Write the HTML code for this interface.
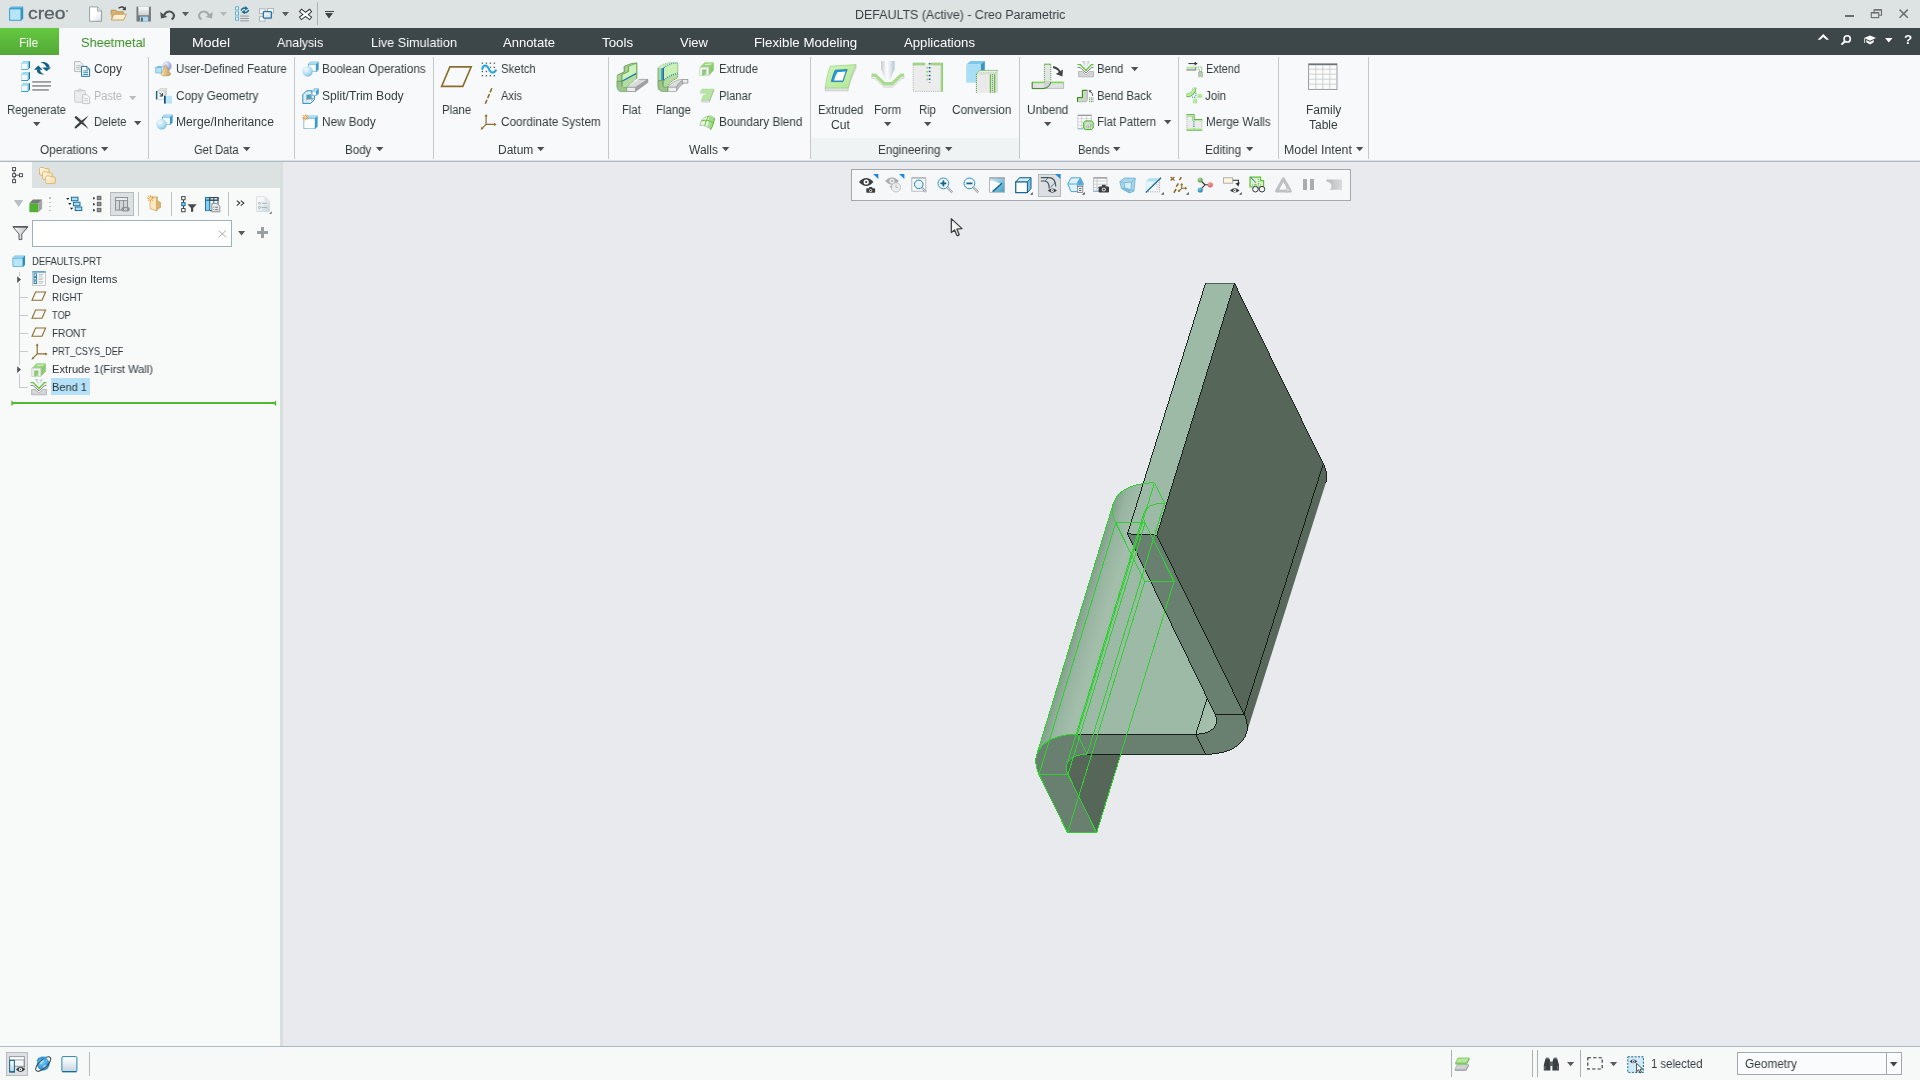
<!DOCTYPE html>
<html>
<head>
<meta charset="utf-8">
<title>DEFAULTS (Active) - Creo Parametric</title>
<style>
html,body{margin:0;padding:0;}
body{width:1920px;height:1080px;position:relative;overflow:hidden;background:#e8eaee;font-family:"Liberation Sans",sans-serif;font-size:12px;color:#353c3f;}
.a{position:absolute;}
.t{position:absolute;white-space:nowrap;line-height:1;transform-origin:0 0;color:#353c3f;will-change:transform;}
svg{position:absolute;overflow:visible;}
#titlebar{left:0;top:0;width:1920px;height:28px;background:#dde2e2;}
#menubar{left:0;top:28px;width:1920px;height:27px;background:#3d4649;}
#filetab{left:0;top:28px;width:59px;height:27px;background:linear-gradient(#63c840,#53a936);}
#smtab{left:59px;top:28px;width:111px;height:27px;background:#f7f9fa;}
#ribbon{left:0;top:55px;width:1920px;height:106px;background:#f7f9fa;}
#ribline{left:0;top:160px;width:1920px;height:2px;background:linear-gradient(#dde4e6 0,#dde4e6 50%,#adbbc0 50%,#adbbc0 100%);}
.sep{position:absolute;top:57px;width:1px;height:102px;background:#c3c9cb;}
#left{left:0;top:162px;width:280px;height:884px;background:#f8fafa;}
#ltabs{left:32px;top:162px;width:248px;height:26px;background:#dce2e2;}
#split{left:280px;top:162px;width:3px;height:884px;background:#d8dfdf;}
#view{left:283px;top:162px;width:1637px;height:884px;background:#e8eaee;}
#status{left:0;top:1046px;width:1920px;height:34px;background:#f7f9f9;border-top:1.4px solid #a9bcc1;box-sizing:border-box;}
.ar{position:absolute;width:0;height:0;border-left:3.5px solid transparent;border-right:3.5px solid transparent;border-top:4px solid #4a5356;}
.ard{border-top-color:#b9bfc1;}
.arw{border-top-color:#fff;}
</style>
</head>
<body>
<div class="a" id="titlebar"></div>
<div class="a" id="menubar"></div>
<div class="a" id="filetab"></div>
<div class="a" id="smtab"></div>
<div class="a" id="ribbon"></div>
<div class="a" id="ribline"></div>
<div class="a" id="left"></div>
<div class="a" id="ltabs"></div>
<div class="a" id="split"></div>
<div class="a" id="view"></div>
<div class="a" id="status"></div>
<div class="a" style="left:811px;top:138px;width:208px;height:22px;background:#f0f3f4"></div>
<div class="sep" style="left:148px"></div>
<div class="sep" style="left:294px"></div>
<div class="sep" style="left:433px"></div>
<div class="sep" style="left:608px"></div>
<div class="sep" style="left:810px"></div>
<div class="sep" style="left:1019px"></div>
<div class="sep" style="left:1178px"></div>
<div class="sep" style="left:1278px"></div>
<div class="sep" style="left:1368px"></div>
<!-- title -->
<svg style="left:8px;top:6px" width="17" height="16" viewBox="0 0 17 16" ><polygon points="1.2,2.6 3.2,0.8 15.2,0.8 15.2,12.6 13.2,14.6 1.2,14.6" fill="#2f93c4"/><polygon points="1.2,2.6 3.2,0.8 15.2,0.8 13.2,2.6" fill="#5fb8df"/><rect x="1.7" y="3" width="11.2" height="11.2" fill="#b8e4f7" stroke="#3a9fd0" stroke-width="0.8"/></svg>
<span class="t" style="left:28.1px;top:5px;font-size:17.2px;color:#596165;-webkit-text-stroke:0.3px #596165;transform:scaleX(1.125)">creo</span>
<div class="a" style="left:65.8px;top:9.6px;width:2.2px;height:2.2px;border-radius:1.1px;background:#70777a"></div>
<svg style="left:89px;top:6px" width="14" height="17" viewBox="0 0 14 17" ><defs><linearGradient id="nd" x1="0" y1="0" x2="1" y2="1"><stop offset="0.5" stop-color="#fff"/><stop offset="1" stop-color="#d6dde2"/></linearGradient></defs><path d="M0.6,0.9 H8.5 L12.6,5 V15.3 H0.6 Z" fill="url(#nd)" stroke="#8e979c" stroke-width="0.9"/><path d="M8.5,0.9 V5 H12.6" fill="#dfe6ea" stroke="#8e979c" stroke-width="0.8"/></svg>
<svg style="left:110px;top:5px" width="18" height="17" viewBox="0 0 18 17" ><path d="M1.2,5.2 h4.6 l1.3,1.6 h6.2 v3 h-12.1 z" fill="#d9b36e" stroke="#b48a45" stroke-width="0.8"/><path d="M1.2,14.9 L1.2,9 L3.6,9 L1.5,14.9 Z" fill="#d9b36e"/><path d="M3.9,9.2 H16.3 L13.6,15 H1.4 Z" fill="#fbefd3" stroke="#c29a55" stroke-width="0.9"/><path d="M8.6,3.3 C10.5,1.6 13,1.6 14.3,3.2" fill="none" stroke="#3b4245" stroke-width="1.4"/><polygon points="12.3,4.9 16,5.2 15.7,1.3" fill="#3b4245"/></svg>
<svg style="left:136px;top:6px" width="16" height="17" viewBox="0 0 16 17" ><defs><linearGradient id="sv" x1="0" y1="0" x2="0" y2="1"><stop offset="0" stop-color="#fdfdfd"/><stop offset="1" stop-color="#c9cfd2"/></linearGradient></defs><rect x="0.5" y="0.7" width="14.4" height="14.8" fill="#73797c"/><rect x="2.3" y="0.7" width="10.6" height="8.6" fill="url(#sv)"/><rect x="3.9" y="10.6" width="8.3" height="4.9" fill="#a9d8ef"/><rect x="5" y="11.6" width="1.8" height="3.9" fill="#596165"/></svg>
<svg style="left:159.6px;top:8px" width="16" height="13" viewBox="0 0 16 13" ><g><path d="M4.2,7.3 C5.2,3.4 10.2,2.2 12.9,5.1 C14.7,7.1 14.1,10 11.6,11.4" fill="none" stroke="#4a5154" stroke-width="2.1"/><polygon points="0.3,4.1 1,10.6 7.3,9.1" fill="#4a5154"/></g></svg>
<svg style="left:182px;top:12.2px" width="7" height="4.2" viewBox="0 0 7 4.2"><polygon points="0,0 7,0 3.5,4.2" fill="#565d60"/></svg>
<svg style="left:197.4px;top:8px" width="16" height="13" viewBox="0 0 16 13" ><g transform="translate(16,0) scale(-1,1)"><path d="M4.2,7.3 C5.2,3.4 10.2,2.2 12.9,5.1 C14.7,7.1 14.1,10 11.6,11.4" fill="none" stroke="#a3a9ab" stroke-width="2.1"/><polygon points="0.3,4.1 1,10.6 7.3,9.1" fill="#a3a9ab"/></g></svg>
<svg style="left:220.4px;top:12.2px" width="7" height="4.2" viewBox="0 0 7 4.2"><polygon points="0,0 7,0 3.5,4.2" fill="#b4b9bb"/></svg>
<svg style="left:235px;top:6.3px" width="15" height="16" viewBox="0 0 15 16" ><rect x="0.6" y="0.9" width="3" height="3" fill="#fff" stroke="#3a9fd0" stroke-width="0.8"/><rect x="0.6" y="6" width="3" height="3" fill="#fff" stroke="#3a9fd0" stroke-width="0.8"/><rect x="0.6" y="11.1" width="3" height="3" fill="#fff" stroke="#3a9fd0" stroke-width="0.8"/><rect x="5.2" y="9.6" width="8.6" height="0.9" fill="#8a9093"/><rect x="5.2" y="12" width="8.6" height="0.9" fill="#8a9093"/><rect x="5.2" y="14.4" width="8.6" height="0.9" fill="#8a9093"/><path d="M6.2,4.6 C6.6,2.2 9.3,1.3 11,2.6" fill="none" stroke="#1f6f94" stroke-width="1.5"/><polygon points="9.8,0.1 13.4,2.5 10.1,4.6" fill="#1f6f94"/><path d="M13.6,3.8 C13.2,6.2 10.5,7.1 8.8,5.8" fill="none" stroke="#1f6f94" stroke-width="1.5"/><polygon points="10,8.3 6.4,5.9 9.7,3.8" fill="#1f6f94"/></svg>
<svg style="left:259px;top:8px" width="16" height="14" viewBox="0 0 16 14" ><rect x="0.5" y="0.8" width="5.6" height="4.6" fill="#f4f6f7" stroke="#a4aaad" stroke-width="0.8"/><rect x="8.6" y="0.4" width="5.8" height="4.6" fill="#f4f6f7" stroke="#a4aaad" stroke-width="0.8"/><rect x="0.5" y="8.6" width="5.6" height="4.6" fill="#f4f6f7" stroke="#a4aaad" stroke-width="0.8"/><defs><linearGradient id="wn" x1="0" y1="0" x2="1" y2="1"><stop offset="0" stop-color="#ffffff"/><stop offset="1" stop-color="#c5d6e2"/></linearGradient></defs><rect x="4.4" y="3.6" width="8" height="6.6" rx="0.8" fill="url(#wn)" stroke="#2377a0" stroke-width="1.3"/></svg>
<svg style="left:281.9px;top:12.2px" width="7" height="4.2" viewBox="0 0 7 4.2"><polygon points="0,0 7,0 3.5,4.2" fill="#565d60"/></svg>
<svg style="left:299px;top:9px" width="13" height="11" viewBox="0 0 13 11" ><path d="M2.7,2.5 L10.3,8.4 M10.3,2.5 L2.7,8.4" stroke="#2e3538" stroke-width="4.2" fill="none" stroke-linecap="square"/><path d="M2.7,2.5 L10.3,8.4 M10.3,2.5 L2.7,8.4" stroke="#fff" stroke-width="2.3" fill="none" stroke-linecap="square"/></svg>
<div class="a" style="left:317px;top:2px;width:1px;height:23px;background:#aab1b4"></div>
<div class="a" style="left:325px;top:10.6px;width:9px;height:1px;background:#3e4548"></div>
<svg style="left:325.4px;top:12.8px" width="8" height="5.4" viewBox="0 0 8 5.4"><polygon points="0,0 8,0 4.0,5.4" fill="#3e4548"/></svg>
<div class="a" style="left:1845px;top:15px;width:9px;height:2px;background:#6a6e70"></div>
<svg style="left:1870px;top:9px" width="13" height="10" viewBox="0 0 13 10" ><path d="M4.1,2.9 V0.8 H11.5 V6.2 H9" fill="none" stroke="#6a6e70" stroke-width="1.1"/><rect x="1.3" y="3.6" width="7.4" height="5" fill="none" stroke="#6a6e70" stroke-width="1.1"/><rect x="1.3" y="3.1" width="7.4" height="1.4" fill="#6a6e70"/><rect x="4.1" y="0.3" width="7.4" height="1.3" fill="#6a6e70"/></svg>
<svg style="left:1898px;top:8px" width="12" height="11" viewBox="0 0 12 11" ><path d="M1.6,1.6 L9.8,9.8 M9.8,1.6 L1.6,9.8" stroke="#6a6e70" stroke-width="1.5" fill="none"/></svg>
<svg style="left:1817px;top:33px" width="13" height="8" viewBox="0 0 13 8" ><polygon points="6.3,0.9 12,6.8 9.4,6.8 6.3,3.9 3.2,6.8 0.6,6.8" fill="#fff"/></svg>
<svg style="left:1840px;top:35px" width="12" height="11" viewBox="0 0 12 11" ><circle cx="7.2" cy="3.9" r="3.1" fill="none" stroke="#fff" stroke-width="1.6"/><path d="M5,6.2 L1.4,9.6" stroke="#fff" stroke-width="1.9"/></svg>
<svg style="left:1863px;top:35px" width="14" height="11" viewBox="0 0 14 11" ><polygon points="7,0.4 13,3 7,5.8 1,3" fill="#fff"/><path d="M3.3,5.1 V7.2 L7,9.6 L10.7,7.2 V5.1 L7,7 Z" fill="#fff"/><path d="M1.6,3.4 V8" stroke="#fff" stroke-width="0.8"/></svg>
<svg style="left:1884.7px;top:37.8px" width="7.6" height="4.4" viewBox="0 0 7.6 4.4"><polygon points="0,0 7.6,0 3.8,4.4" fill="#fff"/></svg>
<span class="t" style="left:1904.2px;top:32.6px;font-size:13.5px;font-weight:bold;color:#fff">?</span>
<!-- ribbon_icons -->
<svg style="left:21px;top:61px" width="31" height="31" viewBox="0 0 31 31" ><polygon points="0.3,2.4000000000000004 2.5,0.2 8.9,0.2 8.9,6.6000000000000005 6.7,8.8 0.3,8.8" fill="#1f8fc5"/><polygon points="6.7,2.4000000000000004 8.200000000000001,0.8999999999999999 8.200000000000001,6.2 6.7,7.9" fill="#7fc0e0"/><polygon points="8.200000000000001,0.5 8.9,0.2 8.9,6.6000000000000005 8.200000000000001,7.1000000000000005" fill="#0f5f86"/><polygon points="0.3,2.4000000000000004 2.5,0.2 8.3,0.2 6.7,2.4000000000000004" fill="#a5e0f7"/><rect x="0.3" y="2.4000000000000004" width="6.4" height="5.6000000000000005" fill="#f0fbff"/><rect x="0.3" y="2.4000000000000004" width="0.6" height="5.6000000000000005" fill="#c9d2d6"/><polygon points="0.3,13.5 2.5,11.3 8.9,11.3 8.9,17.700000000000003 6.7,19.900000000000002 0.3,19.900000000000002" fill="#1f8fc5"/><polygon points="6.7,13.5 8.200000000000001,12.0 8.200000000000001,17.300000000000004 6.7,19.000000000000004" fill="#7fc0e0"/><polygon points="8.200000000000001,11.600000000000001 8.9,11.3 8.9,17.700000000000003 8.200000000000001,18.200000000000003" fill="#0f5f86"/><polygon points="0.3,13.5 2.5,11.3 8.3,11.3 6.7,13.5" fill="#a5e0f7"/><rect x="0.3" y="13.5" width="6.4" height="5.6000000000000005" fill="#f0fbff"/><rect x="0.3" y="13.5" width="0.6" height="5.6000000000000005" fill="#c9d2d6"/><polygon points="0.3,24.5 2.5,22.3 8.9,22.3 8.9,28.700000000000003 6.7,30.900000000000002 0.3,30.900000000000002" fill="#1f8fc5"/><polygon points="6.7,24.5 8.200000000000001,23.0 8.200000000000001,28.300000000000004 6.7,30.000000000000004" fill="#7fc0e0"/><polygon points="8.200000000000001,22.6 8.9,22.3 8.9,28.700000000000003 8.200000000000001,29.200000000000003" fill="#0f5f86"/><polygon points="0.3,24.5 2.5,22.3 8.3,22.3 6.7,24.5" fill="#a5e0f7"/><rect x="0.3" y="24.5" width="6.4" height="5.6000000000000005" fill="#f0fbff"/><rect x="0.3" y="24.5" width="0.6" height="5.6000000000000005" fill="#c9d2d6"/><rect x="11.2" y="20" width="18.8" height="1.8" fill="#9a9c9d"/><rect x="11.2" y="24" width="18.8" height="1.8" fill="#9a9c9d"/><rect x="11.2" y="28" width="16.6" height="1.8" fill="#9a9c9d"/><polygon points="13,8.8 17.3,4.4 21.7,8.8" fill="#0f5f86"/><path d="M15.9,8.6 C15.6,12.2 19,14 23.4,13.3 C20.6,12.5 19,10.8 19.1,8.6 Z" fill="#0f5f86"/><polygon points="21.2,6.4 30.1,6.4 25.5,10.3" fill="#0f5f86"/><path d="M19.6,1.4 C24,0 28.4,2.4 28.7,6.6 L25.4,6.6 C25.2,4 23,2.1 19.6,1.4 Z" fill="#0f5f86"/></svg>
<svg style="left:74px;top:61px" width="17" height="16" viewBox="0 0 17 16" ><path d="M0.6,0.6 H6 L8.8,3.4 V10.6 H0.6 Z" fill="#f3f4f5" stroke="#a5abad" stroke-width="0.8"/><path d="M2.2,4.6 H7 M2.2,6.4 H7 M2.2,8.2 H7" stroke="#b5babc" stroke-width="0.9"/><path d="M7.6,5.4 H12.8 L15.6,8.2 V15.3 H7.6 Z" fill="#fff" stroke="#1f6f94" stroke-width="1"/><path d="M12.8,5.4 V8.2 H15.6" fill="none" stroke="#1f6f94" stroke-width="0.8"/><path d="M9.3,9.9 H14 M9.3,11.7 H14 M9.3,13.5 H14" stroke="#2a8cc0" stroke-width="1"/></svg>
<svg style="left:74px;top:88px" width="17" height="17" viewBox="0 0 17 17" ><rect x="0.7" y="2.4" width="10.6" height="11.8" rx="0.8" fill="#ececec" stroke="#c6c9cb" stroke-width="0.9"/><path d="M3.4,3.2 L4.6,1.4 H5.2 L6,0.4 L6.8,1.4 H7.4 L8.6,3.2 Z" fill="#dcdedf" stroke="#c3c6c8" stroke-width="0.6"/><path d="M8.6,6.6 H13 L15.6,9.2 V15.6 H8.6 Z" fill="#f6f6f6" stroke="#c0c3c5" stroke-width="0.9"/><path d="M10.2,10.6 H14 M10.2,12.6 H14" stroke="#c6c9cb" stroke-width="0.9"/></svg>
<svg style="left:74px;top:115px" width="16" height="16" viewBox="0 0 16 16" ><path d="M0.7,2.7 Q0.5,1.2 2.2,1.1 Q6,4.2 9,7 Q12,10 14.7,14.2 Q10.6,11 7.2,8.6 Q3.6,5.6 0.7,2.7 Z" fill="#3b4043"/><path d="M0.6,12 Q0.3,13.6 2,13.6 Q5.8,10.4 9,7.2 Q12,4 14.6,0.4 Q10.4,3.4 7,6 Q3.4,9 0.6,12 Z" fill="#3b4043"/></svg>
<svg style="left:155px;top:61px" width="18" height="16" viewBox="0 0 18 16" ><defs><radialGradient id="sp1" cx="0.35" cy="0.3" r="0.8"><stop offset="0" stop-color="#f2f4ff"/><stop offset="1" stop-color="#7d8fd6"/></radialGradient><linearGradient id="cn" x1="0" y1="0" x2="1" y2="0"><stop offset="0" stop-color="#f6e3bb"/><stop offset="1" stop-color="#c39a53"/></linearGradient></defs><circle cx="12" cy="4.9" r="4.6" fill="url(#sp1)"/><polygon points="0.8,6.4 2.4,4.9 8,4.9 6.6,6.4" fill="#6fc3e8"/><rect x="0.8" y="6.4" width="5.8" height="5.6" fill="#b6e2f6" stroke="#4aa8d6" stroke-width="0.6"/><path d="M10.7,3.6 L15.7,13.2 C15.2,15.4 6.8,15.6 5.9,13.4 Z" fill="url(#cn)" stroke="#b48c49" stroke-width="0.5"/></svg>
<svg style="left:155px;top:88px" width="18" height="17" viewBox="0 0 18 17" ><polygon points="2.6,3 5,0.6 12,0.6 9.8,3" fill="#e9ebec" stroke="#b6babc" stroke-width="0.5"/><polygon points="9.8,3 12,0.6 12,7 9.8,9" fill="#cfd3d5"/><rect x="2.6" y="3" width="7.2" height="8.4" fill="#f3f4f5" stroke="#babec0" stroke-width="0.5"/><rect x="0.9" y="3" width="1.3" height="8.4" fill="#1b5f80"/><path d="M4.4,4.8 L7.4,7.8 M7.6,5.2 V8 H4.8" stroke="#2e3538" stroke-width="1" fill="none"/><rect x="10" y="7.8" width="7" height="7.8" fill="#b9e5f8"/><rect x="9" y="7.8" width="1.7" height="7.8" fill="#14506e"/></svg>
<svg style="left:155.6px;top:114px" width="18" height="16" viewBox="0 0 18 16" ><defs><radialGradient id="mg1" cx="0.35" cy="0.3" r="0.9"><stop offset="0" stop-color="#f4fbfe"/><stop offset="0.6" stop-color="#a8d9ef"/><stop offset="1" stop-color="#4aa3cf"/></radialGradient></defs><polygon points="6,3 8.3,0.7 16.6,0.7 16.6,8.6 14.3,10.9 6,10.9" fill="#3d9acb"/><polygon points="6,3 8.3,0.7 16.6,0.7 14.3,3" fill="#a8daf1"/><rect x="6.6" y="3.5" width="7.3" height="7" fill="#f2fafd"/><circle cx="5.6" cy="10.3" r="5.2" fill="url(#mg1)"/></svg>
<svg style="left:301.6px;top:61px" width="18" height="16" viewBox="0 0 18 16" ><defs><radialGradient id="mg2" cx="0.35" cy="0.3" r="0.9"><stop offset="0" stop-color="#f4fbfe"/><stop offset="0.6" stop-color="#a8d9ef"/><stop offset="1" stop-color="#4aa3cf"/></radialGradient></defs><polygon points="6,3 8.3,0.7 16.6,0.7 16.6,8.6 14.3,10.9 6,10.9" fill="#3d9acb"/><polygon points="6,3 8.3,0.7 16.6,0.7 14.3,3" fill="#a8daf1"/><rect x="6.6" y="3.5" width="7.3" height="7" fill="#f2fafd"/><circle cx="5.6" cy="10.3" r="5.2" fill="url(#mg2)"/></svg>
<svg style="left:301.6px;top:88px" width="18" height="17" viewBox="0 0 18 17" ><polygon points="0.8,6.6 4.6,2.8 10,2.8 10,6 12.4,6 12.4,11.6 8.6,15.4 0.8,15.4" fill="#d9eef8" stroke="#1f7fb0" stroke-width="0.9"/><polygon points="4.4,6.4 9.6,6.4 9.6,10.2 12,10.2 9.2,13 4.4,13" fill="#5b9cbb"/><polygon points="5.6,11.4 10.4,11.4 8.8,13 4.4,13" fill="#f4ece6"/><polygon points="9.8,3 12.2,0.6 16.8,0.6 16.8,5.4 14.4,7.8 9.8,7.8" fill="#3d9acb"/><polygon points="9.8,3 12.2,0.6 16.8,0.6 14.4,3" fill="#a8daf1"/><rect x="10.4" y="3.4" width="3.7" height="3.9" fill="#f4fbfe"/></svg>
<svg style="left:301.6px;top:114px" width="17" height="16" viewBox="0 0 17 16" ><polygon points="1.6,4.2 4,1.8 15.6,1.8 15.6,12.6 13.2,15 1.6,15" fill="#3d9acb"/><polygon points="1.6,4.2 4,1.8 15.6,1.8 13.2,4.2" fill="#a8daf1"/><rect x="2.2" y="4.7" width="10.6" height="9.8" fill="#fff"/><g stroke="#f08c1e" stroke-width="1"><path d="M3.4,0.4 V6.4 M0.4,3.4 H6.4 M1.3,1.3 L5.5,5.5 M5.5,1.3 L1.3,5.5"/></g><circle cx="3.4" cy="3.4" r="1.1" fill="#fff3d6"/></svg>
<svg style="left:440px;top:64px" width="33" height="24" viewBox="0 0 33 24" ><polygon points="9.9,2.9 31.2,2.9 22.8,22.4 1.6,22.4" fill="none" stroke="#8c6d2f" stroke-width="1.6"/></svg>
<svg style="left:481px;top:62px" width="17" height="16" viewBox="0 0 17 16" ><rect x="0.7499999999999999" y="0.5499999999999999" width="1.3" height="1.3" fill="#4a4f52"/><rect x="0.7499999999999999" y="4.75" width="1.3" height="1.3" fill="#4a4f52"/><rect x="0.7499999999999999" y="8.85" width="1.3" height="1.3" fill="#4a4f52"/><rect x="0.7499999999999999" y="13.049999999999999" width="1.3" height="1.3" fill="#4a4f52"/><rect x="4.75" y="0.5499999999999999" width="1.3" height="1.3" fill="#4a4f52"/><rect x="4.75" y="4.75" width="1.3" height="1.3" fill="#4a4f52"/><rect x="4.75" y="8.85" width="1.3" height="1.3" fill="#4a4f52"/><rect x="4.75" y="13.049999999999999" width="1.3" height="1.3" fill="#4a4f52"/><rect x="8.75" y="0.5499999999999999" width="1.3" height="1.3" fill="#4a4f52"/><rect x="8.75" y="4.75" width="1.3" height="1.3" fill="#4a4f52"/><rect x="8.75" y="8.85" width="1.3" height="1.3" fill="#4a4f52"/><rect x="8.75" y="13.049999999999999" width="1.3" height="1.3" fill="#4a4f52"/><rect x="12.75" y="0.5499999999999999" width="1.3" height="1.3" fill="#4a4f52"/><rect x="12.75" y="4.75" width="1.3" height="1.3" fill="#4a4f52"/><rect x="12.75" y="8.85" width="1.3" height="1.3" fill="#4a4f52"/><rect x="12.75" y="13.049999999999999" width="1.3" height="1.3" fill="#4a4f52"/><path d="M1.25,6.9 C2.5,2.4 6,2.5 7.7,6.7 C9.5,11.5 12.8,11.7 14.9,8.4" fill="none" stroke="#f7f9fa" stroke-width="3.6"/><path d="M1.25,6.9 C2.5,2.4 6,2.5 7.7,6.7 C9.5,11.5 12.8,11.7 14.9,8.4" fill="none" stroke="#2aa7df" stroke-width="2.1" stroke-linecap="round"/></svg>
<svg style="left:484px;top:87px" width="10" height="18" viewBox="0 0 10 18" ><path d="M1.3,16.8 L7.8,1.3" stroke="#8c6d2f" stroke-width="1.6" stroke-dasharray="4.4,1.8" fill="none"/></svg>
<svg style="left:480.4px;top:113px" width="18" height="18" viewBox="0 0 18 18" ><path d="M6.1,11.4 V2.6 M6.1,11.4 H15 M6.1,11.4 L1.8,15.6" stroke="#8c6d2f" stroke-width="1.2" fill="none"/><polygon points="6.1,1 4.5,3.6 7.7,3.6" fill="#8c6d2f"/><polygon points="16.6,11.4 14,9.8 14,13" fill="#8c6d2f"/><polygon points="0.7,16.7 1.4,13.8 3.6,16" fill="#8c6d2f"/></svg>
<svg style="left:616px;top:62px" width="33" height="31" viewBox="0 0 33 31" ><polygon points="10.7,25.5 19.6,25.5 31.9,17.3 22.6,17.3" fill="#d9dadb"/><polygon points="10.7,25.5 19.6,25.5 19.6,29.6 10.7,29.6" fill="#ededee" stroke="#b5b7b8" stroke-width="0.4"/><polygon points="19.6,25.5 31.9,17.3 31.9,19.9 19.6,29.6" fill="#9c9e9f"/><polygon points="5.9,12.5 12.2,9.6 12.2,3.6 20.7,1 20.7,16.2 10.7,25.3 5.9,25.3" fill="#cdf2ba"/><polygon points="5.9,19.2 20.7,11.3 20.7,16.2 10.7,25.3 5.9,25.3" fill="#b4dba2"/><polygon points="1.1,13.6 5.9,12.5 5.9,25.3 5.9,25.3 4.6,24.6 1.1,25.1" fill="#a9d197"/><polygon points="1.1,13.6 8.1,10.3 8.1,4.4 12.2,3.6 12.2,9.6 5.9,12.5" fill="#a9d197"/><polygon points="8.1,4.4 16.6,1.6 20.7,1 12.2,3.6" fill="#b9e3a6"/><path d="M1.1,19.4 V25.1 C1.1,27.8 3,29.6 5.6,29.6 H10.7 V25.5 H7.4 C6.4,25.5 5.9,24.9 5.9,24 V19.4 Z" fill="#9dc48c" stroke="#6fa45b" stroke-width="0.7"/><path d="M1.1,13.6 V25.1 M5.9,12.5 V24 M1.1,13.6 L8.1,10.3 V4.4 L16.4,1.6 L20.7,1 V16.2 M12.2,3.6 V9.6 L5.9,12.5" fill="none" stroke="#7fb36a" stroke-width="0.7"/><path d="M5.9,19.2 L20.5,11.4" stroke="#1779b0" stroke-width="1.2"/><path d="M10.7,25.3 L20.7,16.4" stroke="#5d8f4c" stroke-width="0.7" stroke-dasharray="0.9,0.9"/><path d="M1.2,13.1 L8.3,9.9 V4.4 L15.6,1.5 L20.8,1.1 V16.6 M5.9,12.5 L12.6,9.4 V4.2 L20.6,1.3 M5.9,12.5 V23.4 M1.2,19.3 H5.9" fill="none" stroke="#6a9f55" stroke-width="0.8"/><path d="M10.8,25.3 H19.4 V29.5 H10.8 M19.4,25.3 L31.8,17.4 V20.6 L19.4,29.5 M22.8,17.4 H31.8" fill="none" stroke="#8f9192" stroke-width="0.7"/></svg>
<svg style="left:656px;top:61px" width="33" height="31" viewBox="0 0 33 31" ><path d="M11.8,26.2 H20.4 C22.6,22 25,20 28,18.5 H31.8 V18.5 H23.6 C19.6,19.6 14.8,22 11.8,26.2 Z" fill="#dcddde" stroke="#8f9192" stroke-width="0.6"/><path d="M20.4,26.2 C22.6,22 25,20 28,18.6 H31.8 V22 H28.6 C25.4,23.4 22.8,26 20.4,30.3 Z" fill="#b9bbbc" stroke="#8f9192" stroke-width="0.6"/><rect x="26.6" y="18.5" width="5.2" height="3.5" fill="#ececed" stroke="#8f9192" stroke-width="0.6"/><rect x="11.8" y="26.2" width="8.6" height="4.1" fill="#efeff0" stroke="#8f9192" stroke-width="0.6"/><path d="M7.9,7 C11,3.8 16,1.8 21.8,1.6 V17 C17.4,18.6 13.6,21.6 11.6,25.7 H7 Z" fill="#c9f1b5"/><path d="M7.9,19.4 C11.6,15.6 16.4,13.2 21.8,12.6 V17 C17.4,18.6 13.6,21.6 11.6,25.7 H7 V19.4 Z" fill="#b4dba2"/><path d="M2,7 C2.8,6 3.8,5.4 5,4.9 V24 H2 Z" fill="#b0d79e"/><path d="M2,7 C5,3.2 12,1 21.8,1.6 C14,1.9 9.4,4 7.9,7 L5,7.6 Z" fill="#c3e9b0"/><rect x="4.96" y="7" width="1.5" height="12.5" fill="#2fb0ea"/><rect x="6.4" y="6.6" width="1.5" height="12.9" fill="#14628c"/><polygon points="4.8,6.2 6.9,5.2 7.4,6.6 5,7.2" fill="#ffffff"/><path d="M2,19.6 V25.6 C2,28.4 3.9,30.3 6.6,30.3 H11.8 V26.2 H8.6 C7.6,26.2 7,25.6 7,24.6 V19.6 Z" fill="#9dc48c" stroke="#5f9a4a" stroke-width="0.8"/><path d="M2,7 V19.6 M7,19.6 V24" stroke="#6a9f55" stroke-width="0.8"/><path d="M8,6.8 C11,3.8 16,1.9 21.6,1.8 M8,19.2 C11.6,15.6 16.4,13.2 21.6,12.6" fill="none" stroke="#1479b0" stroke-width="1.1" stroke-dasharray="1,1.1"/><path d="M21.8,1.8 V17 M11.6,25.6 C13.6,21.6 17.4,18.6 21.8,17" fill="none" stroke="#4f8a3c" stroke-width="0.9" stroke-dasharray="0.9,1"/><path d="M2.4,6.4 C5.4,3.2 11,1.4 17,1.4" fill="none" stroke="#7fb36a" stroke-width="0.7" stroke-dasharray="0.9,1"/></svg>
<svg style="left:698.6px;top:61.4px" width="16" height="16" viewBox="0 0 16 16" ><polygon points="0.8,6.2 5.6,1.4 14.6,1.4 14.6,9.4 9.8,14.4 0.8,14.4" fill="#a6dc8c"/><polygon points="0.8,6.2 5.6,1.4 14.6,1.4 9.8,6.2" fill="#9ad57f"/><polygon points="9.8,6.2 14.6,1.4 14.6,9.4 9.8,14.4" fill="#8ccb70"/><path d="M0.8,6.2 H9.8 V14.4 H7.2 V8.8 H3.4 V14.4 H0.8 Z" fill="#f1f2f3" stroke="#c1c4c5" stroke-width="0.5"/><polygon points="3.4,14.4 3.4,8.8 7.2,8.8 7.2,10.6 5.4,12.4 5.4,14.4" fill="#8bcb70"/><path d="M6,3.6 L12.6,3" stroke="#d6f5c6" stroke-width="1"/></svg>
<svg style="left:699px;top:88px" width="16" height="16" viewBox="0 0 16 16" ><polygon points="1.2,4.4 3,1.2 15,1.2 10.4,12.4 2.4,12.4 4.6,7.2 6.8,7.2 8,4.4" fill="#b4e89c" stroke="#8ccb70" stroke-width="0.5"/><polygon points="2.4,12.4 10.4,12.4 10.4,14.2 2.4,14.2" fill="#e2e3e4" stroke="#b5b8b9" stroke-width="0.4"/><polygon points="10.4,12.4 15,1.2 15,3 10.4,14.2" fill="#a4a7a8"/><polygon points="1.2,4.4 8,4.4 7.4,5.8 1.2,5.8" fill="#cfd1d2"/></svg>
<svg style="left:698.6px;top:115px" width="16" height="16" viewBox="0 0 16 16" ><path d="M0.8,10.4 C1.6,5 5,1.8 9.4,1 C11.6,0.8 13.6,1.2 15.4,3 C15,7 13.6,11.4 11.6,14.6 C9,11.6 4.6,10 0.8,10.4 Z" fill="#e3f6d9" stroke="#a9acad" stroke-width="0.7"/><path d="M9.4,1 C11.6,0.8 13.6,1.2 15.4,3 C15,7 13.6,11.4 11.6,14.6 C10.6,13.4 9.6,12.6 8.4,12 C10,8.4 10.2,4.6 9.4,1 Z" fill="#a6dc8c"/><path d="M5.8,10.8 C6.6,7.6 7.4,4.6 9.4,1 M2.2,6 C6,4.6 11,5.4 14.6,8.2 M11.6,14.6 C13.6,11.4 15,7 15.4,3" fill="none" stroke="#5fc03a" stroke-width="1"/></svg>
<svg style="left:824px;top:63px" width="33" height="29" viewBox="0 0 33 29" ><defs><linearGradient id="ec" x1="0" y1="0" x2="1" y2="1"><stop offset="0" stop-color="#cdf4b8"/><stop offset="1" stop-color="#b4e79b"/></linearGradient></defs><path d="M1.2,25 V27.8 H24.2 V25.6 C26.6,17 29.4,10.6 32,5.2 V1.6 Z" fill="#e0e1e2" stroke="#aeb1b2" stroke-width="0.5"/><path d="M6.2,3.2 L32,1.6 C29,7.6 26.4,15 24.2,25 H1.2 C2.4,16 4,9 6.2,3.2 Z" fill="url(#ec)" stroke="#8fce74" stroke-width="0.6"/><path d="M11.2,7.2 L23.2,6.6 C21.6,10.4 20.2,14.2 19,18.6 H7.4 C8.4,14.2 9.6,10.6 11.2,7.2 Z" fill="#2a9bd8" stroke="#166a98" stroke-width="0.7"/><path d="M13.4,9.2 L21.6,8.6 C20.4,11.6 19.4,14.6 18.6,17.6 H10 C10.8,14.6 12,11.8 13.4,9.2 Z" fill="#ffffff"/></svg>
<svg style="left:871px;top:60px" width="34" height="30" viewBox="0 0 34 30" ><defs><linearGradient id="pn" x1="0" y1="0" x2="1" y2="0"><stop offset="0" stop-color="#c9cdd0"/><stop offset="0.45" stop-color="#ffffff"/><stop offset="1" stop-color="#b9c7d2"/></linearGradient></defs><path d="M10,1 H23.6 V9.2 L19.4,19.6 H14.4 L10,9.2 Z" fill="url(#pn)"/><path d="M0.8,15 H4.8 L14,23.4 H20.4 L29.6,15 H33 V18.6 H30.8 L21.6,27.2 H12.8 L3.6,18.6 H0.8 Z" fill="#eceded" stroke="#bcbfc0" stroke-width="0.5"/><path d="M0.8,13.6 H4.8 L14,22 H20.4 L29.6,13.6 H33 V16.8 H30.8 L21.6,25.4 H12.8 L3.6,16.8 H0.8 Z" fill="#a9dc91"/></svg>
<svg style="left:912px;top:62px" width="32" height="31" viewBox="0 0 32 31" ><rect x="1" y="1.6" width="29" height="28" fill="#ececed"/><path d="M1,1 H12.8 V3 H1 Z M19.2,1 H30.6 V3 H19.2 Z" fill="#a9dc91" stroke="#7cc05e" stroke-width="0.5"/><rect x="28.6" y="1" width="2.2" height="28.6" fill="#a9dc91"/><path d="M30.3,1 V29.6" stroke="#6cbf4a" stroke-width="0.7"/><path d="M1.2,3 V29.4 H28.6" fill="none" stroke="#9a9ea0" stroke-width="0.8" stroke-dasharray="0.9,1.3"/><path d="M17.6,1 V21" stroke="#0e5f8a" stroke-width="1.7" stroke-dasharray="1.5,2.4"/><path d="M15.2,5 V20" stroke="#8fcf76" stroke-width="1.6" stroke-dasharray="1.5,2.4"/></svg>
<svg style="left:965px;top:60px" width="34" height="34" viewBox="0 0 34 34" ><polygon points="1.2,4.6 15.6,4.6 19.8,1 5.4,1" fill="#7cc8ea"/><polygon points="15.6,4.6 19.8,1 19.8,18.6 15.6,22.6" fill="#3c93c0"/><rect x="1.2" y="4.6" width="14.4" height="18" fill="#a9dff6"/><polygon points="11.4,14.2 14.6,10.4 33,10.4 30,14.2" fill="#f2f2f3" stroke="#7cc05e" stroke-width="0.8"/><rect x="11.4" y="14.2" width="13.6" height="18.6" fill="#eaeaeb"/><polygon points="25,14.2 30,14.2 33,10.4 33,32.8 25,32.8" fill="#dcdddd"/><path d="M11.4,14.2 V32.8" stroke="#3f8f2a" stroke-width="1" stroke-dasharray="1,1"/><path d="M25.4,14.2 V32.8 M29.6,14.2 V32.8" stroke="#5fc03a" stroke-width="1.2"/><path d="M27.5,14.2 V32.8" stroke="#3f8f2a" stroke-width="0.8" stroke-dasharray="1,1"/><path d="M14.6,12.3 H31" stroke="#9a9ea0" stroke-width="0.7" stroke-dasharray="0.8,0.9"/></svg>
<svg style="left:1031px;top:63px" width="34" height="27" viewBox="0 0 34 27" ><rect x="13.2" y="1.2" width="6.8" height="18" fill="#e4e5e6"/><path d="M13.2,1.2 H20" stroke="#6cbf4a" stroke-width="1.2"/><path d="M13.4,1.6 V19.2 M19.8,1.6 V17" stroke="#3f8f2a" stroke-width="0.9" stroke-dasharray="1,1.1"/><path d="M1.2,19.4 H32.6 V25.4 H1.2 Z" fill="#e1e2e3" stroke="#8d9193" stroke-width="0.5"/><path d="M1.2,19.4 H32.6" stroke="#7fd65a" stroke-width="1.6"/><path d="M1.2,19 V25.6 H13" stroke="#2f7d1c" stroke-width="0.9" fill="none"/><path d="M12.6,25.4 C16.4,25.2 18.8,23 19.8,19.4 H20.4 V17.4 L13.4,19.4 Z" fill="#cfd1d2"/><path d="M12.6,25.4 C16.4,25.2 18.8,23 19.8,19.2" fill="none" stroke="#2f7d1c" stroke-width="1"/><path d="M22,4 C26.4,5 29,8 29.6,11.4" fill="none" stroke="#3f4447" stroke-width="1.8"/><polygon points="32,6.6 31.4,13.6 24.8,11" fill="#3f4447"/></svg>
<svg style="left:1077px;top:61px" width="17" height="17" viewBox="0 0 17 17" ><defs><linearGradient id="pch" x1="0" y1="0" x2="1" y2="0"><stop offset="0" stop-color="#aeb2b4"/><stop offset="0.5" stop-color="#f7f8f9"/><stop offset="1" stop-color="#a5c3d6"/></linearGradient></defs><polygon points="5.4,0.1 12.7,0.1 9,8.5" fill="url(#pch)"/><path d="M1.6,10.5 H5.6 L9,14 L12.4,10.5 H16.5 V15.8 H1.6 Z" fill="#d2d4d5" stroke="#a3a7a9" stroke-width="0.7"/><path d="M0.5,5.1 H3.2 L9,10.9 L14.6,5.1 H16.5" fill="none" stroke="#ffffff" stroke-width="2.4"/><path d="M0.5,3.6 H3.3 L9,9.5 L14.4,3.6 H16.5" fill="none" stroke="#5fc03a" stroke-width="1.4"/><path d="M0.5,6.4 H3 L9,11.9 L14.8,6.4 H16.5" fill="none" stroke="#5d6164" stroke-width="0.8"/></svg>
<svg style="left:1077px;top:89px" width="17" height="14" viewBox="0 0 17 14" ><path d="M0.5,8.6 H5.4 V1.3 H10.3 V10.6 Q10.3,12.75 8.4,12.75 H0.5 Z" fill="#d0d2d3" stroke="#9a9ea0" stroke-width="0.7"/><path d="M1.1,12.4 V9.3 H6.1 V2 H9.9" fill="none" stroke="#b0ef95" stroke-width="1.2"/><path d="M0.5,12.75 V8.6 H5.4 V1.3 H10.3" fill="none" stroke="#2f7d1c" stroke-width="1"/><path d="M12.2,9 H16.4 M12.2,10.8 H16.4 M12.2,12.6 H16.4" stroke="#2f7d1c" stroke-width="0.9" stroke-dasharray="0.9,0.8" fill="none"/><path d="M15.6,6.9 C15.6,4.6 14.6,3 12.8,2.2" fill="none" stroke="#3f4447" stroke-width="0.9"/><polygon points="11.6,1.2 14.6,1.3 13,3.8" fill="#3f4447"/></svg>
<svg style="left:1077px;top:113.6px" width="17" height="16" viewBox="0 0 17 16" ><rect x="0.9" y="1" width="13.5" height="13.9" fill="#fbfbfc" stroke="#b8bbbd" stroke-width="0.7"/><path d="M0.9,4.6 H14.4 M0.9,8 H14.4 M0.9,11.4 H14.4 M4.6,1 V14.9 M9.6,1 V14.9" stroke="#c9cccd" stroke-width="0.7"/><path d="M0.9,1.4 H14.4" stroke="#8d9295" stroke-width="1"/><path d="M0.9,14.7 H6" stroke="#7fbde0" stroke-width="1"/><path d="M8.6,6.9 H14.6 L16.2,8.5 V14 L14.4,15.6 H8.2 L6.7,14.2 V8.6 Z" fill="#b0ef95" stroke="#3f9a2a" stroke-width="0.9"/><rect x="8.6" y="8.8" width="5.8" height="4.9" fill="#dcdedf"/><path d="M9.4,13 H13.6 M13.6,9.6 V13 M10.6,11.2 H11.4" stroke="#4f5457" stroke-width="0.7" stroke-dasharray="0.8,0.9"/></svg>
<svg style="left:1185.6px;top:60.6px" width="17" height="17" viewBox="0 0 17 17" ><rect x="0.5" y="5.6" width="9.2" height="1.9" fill="#b0ef95"/><rect x="0.5" y="7.5" width="9.2" height="1.5" fill="#c9cbcc"/><path d="M0.5,9.1 H9.8 V5.6" fill="none" stroke="#6a6e71" stroke-width="0.8"/><path d="M2.4,2.6 H10.6" stroke="#2e3336" stroke-width="1"/><polygon points="11.6,2.6 8.6,0.7 8.6,4.5" fill="#2e3336"/><path d="M12.2,6 H16 V9 H12.2 Z" fill="none" stroke="#4faf2c" stroke-width="0.9" stroke-dasharray="1,1.2"/><path d="M13,16.2 V10.8 H16 V16.2" fill="none" stroke="#6a6e71" stroke-width="0.8"/><rect x="13.8" y="11.3" width="1.3" height="4.9" fill="#9be57c"/></svg>
<svg style="left:1185.6px;top:87.4px" width="17" height="17" viewBox="0 0 17 17" ><path d="M0.5,8.45 C5,8.45 8.65,5.4 8.65,0.8" fill="none" stroke="#5fa843" stroke-width="3.6"/><path d="M0.5,8.2 C4.8,8.2 8.4,5.2 8.4,0.8" fill="none" stroke="#b4f09a" stroke-width="2.7"/><rect x="11.4" y="6.8" width="4.9" height="3.3" fill="#b4f09a"/><rect x="7" y="11.6" width="3.3" height="4.8" fill="#b4f09a"/><path d="M11.4,10.2 H16.3 M10.4,11.6 V16.4" stroke="#7fcf5c" stroke-width="0.6"/><path d="M9.8,5.8 V10.2 M6,10.2 H9.8" stroke="#1779b0" stroke-width="1" stroke-dasharray="1,1" fill="none"/></svg>
<svg style="left:1185.6px;top:113.6px" width="17" height="17" viewBox="0 0 17 17" ><path d="M0.6,1.2 H7.6 V6 H16.2 V15.4 H0.6 Z" fill="#ebebec"/><path d="M0.5,1.3 H7.6 V6 H16.3" fill="none" stroke="#4f9a35" stroke-width="2"/><path d="M0.5,1.6 H7.3 V6.3 H16.3" fill="none" stroke="#b0ef95" stroke-width="1.2"/><rect x="0.5" y="14.4" width="15.8" height="1.9" fill="#b0ef95"/><path d="M0.5,16.3 H16.3" stroke="#4f9a35" stroke-width="0.7"/><path d="M0.9,3 V14 M15.9,7.4 V14" stroke="#9a9ea0" stroke-width="0.8" stroke-dasharray="0.9,1.2"/><path d="M7.9,7.2 V14.2" stroke="#1467a0" stroke-width="1.1" stroke-dasharray="1.1,1.2"/></svg>
<svg style="left:1308.4px;top:63.4px" width="30" height="28" viewBox="0 0 30 28" ><rect x="0.6" y="0.8" width="28.4" height="25.6" fill="#fbfbfb" stroke="#8d9193" stroke-width="0.9"/><rect x="0.6" y="0.8" width="28.4" height="1.4" fill="#6c7174"/><path d="M0.6,6.2 H29" stroke="#c3c6c7" stroke-width="0.8"/><path d="M0.6,11.2 H29" stroke="#c3c6c7" stroke-width="0.8"/><path d="M0.6,16.2 H29" stroke="#c3c6c7" stroke-width="0.8"/><path d="M0.6,21.2 H29" stroke="#c3c6c7" stroke-width="0.8"/><path d="M7.8,2 V26.4" stroke="#c3c6c7" stroke-width="0.8"/><path d="M14.8,2 V26.4" stroke="#c3c6c7" stroke-width="0.8"/><path d="M21.8,2 V26.4" stroke="#c3c6c7" stroke-width="0.8"/></svg>
<!-- leftp -->
<div class="a" style="left:0;top:162px;width:32px;height:26px;background:#f8fafa"></div>
<svg style="left:12px;top:167px" width="12" height="17" viewBox="0 0 12 17" ><path d="M2.1,3.6 V12.6 M3.6,8.2 H7.4" stroke="#3b3f42" stroke-width="0.9"/><rect x="0.6" y="0.6" width="3" height="3" fill="#fff" stroke="#3b3f42" stroke-width="0.9"/><rect x="0.6" y="6.7" width="3" height="3" fill="#fff" stroke="#3b3f42" stroke-width="0.9"/><rect x="0.6" y="12.7" width="3" height="3" fill="#fff" stroke="#3b3f42" stroke-width="0.9"/><rect x="7.5" y="6.7" width="3" height="3" fill="#fff" stroke="#3b3f42" stroke-width="0.9"/></svg>
<svg style="left:39px;top:167px" width="17" height="17" viewBox="0 0 17 17" ><defs><linearGradient id="fo" x1="0" y1="0" x2="1" y2="1"><stop offset="0" stop-color="#fffaf0"/><stop offset="1" stop-color="#f5d89c"/></linearGradient></defs><path d="M0.5,1.7 q0,-1.2 1.2,-1.2 h3 l1,1 h3.4 q1,0 1,1 v4.6 q0,1 -1,1 h-7.6 q-1,0 -1,-1 z" fill="url(#fo)" stroke="#d6ad62" stroke-width="0.8"/><path d="M3.6,6.0 q0,-1.2 1.2,-1.2 h3 l1,1 h3.4 q1,0 1,1 v4.6 q0,1 -1,1 h-7.6 q-1,0 -1,-1 z" fill="url(#fo)" stroke="#d6ad62" stroke-width="0.8"/><path d="M6.7,10.2 q0,-1.2 1.2,-1.2 h3 l1,1 h3.4 q1,0 1,1 v4.6 q0,1 -1,1 h-7.6 q-1,0 -1,-1 z" fill="url(#fo)" stroke="#d6ad62" stroke-width="0.8"/></svg>
<svg style="left:13.8px;top:200px" width="9.2" height="7" viewBox="0 0 9.2 7"><polygon points="0,0 9.2,0 4.6,7" fill="#b9bec0"/></svg>
<svg style="left:28.6px;top:198.6px" width="14" height="14" viewBox="0 0 14 14" ><polygon points="0.4,4.2 3.9,0.5 13.1,0.5 9.3,4.2" fill="#77797a"/><polygon points="9.3,4.2 13.1,0.5 13.1,9.7 9.3,13.2" fill="#a2a4a5"/><rect x="0.4" y="4.2" width="8.9" height="9" fill="#52b035"/></svg>
<div class="a" style="left:49px;top:197.4px;width:2px;height:1.7px;background:#bbc0c2"></div>
<div class="a" style="left:49px;top:201.5px;width:2px;height:1.7px;background:#bbc0c2"></div>
<div class="a" style="left:49px;top:205.5px;width:2px;height:1.7px;background:#bbc0c2"></div>
<div class="a" style="left:49px;top:209.5px;width:2px;height:1.7px;background:#bbc0c2"></div>
<svg style="left:65.6px;top:196.8px" width="17" height="15" viewBox="0 0 17 15" ><rect x="5.4" y="0.2" width="6.6" height="3.6" fill="#a5e0f7" stroke="#14628c" stroke-width="0.9"/><polygon points="0.20000000000000018,1.0 3.4000000000000004,1.0 1.8000000000000003,3.0" fill="#1c1f21"/><rect x="7.4" y="5.2" width="6.6" height="3.6" fill="#a5e0f7" stroke="#14628c" stroke-width="0.9"/><polygon points="2.2,6.0 5.4,6.0 3.8000000000000003,8.0" fill="#1c1f21"/><rect x="9.2" y="10" width="6.6" height="3.6" fill="#a5e0f7" stroke="#14628c" stroke-width="0.9"/><polygon points="3.999999999999999,10.8 7.199999999999999,10.8 5.6,12.8" fill="#1c1f21"/></svg>
<svg style="left:92.8px;top:196px" width="9" height="16" viewBox="0 0 9 16" ><rect x="4.2" y="0.2" width="3.8" height="3.6" fill="#8d9092" stroke="#4f5355" stroke-width="0.7"/><polygon points="0.2,0.8 0.2,3.8000000000000003 2.2,2.3000000000000003" fill="#1c1f21"/><rect x="4.2" y="6.2" width="3.8" height="3.6" fill="#8d9092" stroke="#4f5355" stroke-width="0.7"/><polygon points="0.2,6.8 0.2,9.8 2.2,8.3" fill="#1c1f21"/><rect x="4.2" y="12.2" width="3.8" height="3.6" fill="#8d9092" stroke="#4f5355" stroke-width="0.7"/><polygon points="0.2,12.799999999999999 0.2,15.799999999999999 2.2,14.299999999999999" fill="#1c1f21"/></svg>
<div class="a" style="left:110px;top:192px;width:24px;height:24px;box-sizing:border-box;background:#dde0e2;border:1px solid #b4babd"></div>
<svg style="left:115px;top:197px" width="15" height="15" viewBox="0 0 15 15" ><rect x="0.5" y="0.5" width="12" height="12.6" fill="#d3d6d8" stroke="#8d9295" stroke-width="1"/><path d="M0.5,3.4 H12.5 M4.5,0.5 V13 M8.5,0.5 V13" stroke="#8d9295" stroke-width="1"/><rect x="1" y="1" width="11" height="2" fill="#e9ebec"/><ellipse cx="10.6" cy="12.2" rx="4.2" ry="2.4" fill="#8d9295"/><circle cx="10.6" cy="12.2" r="1.3" fill="#e6e8e9"/><circle cx="10.6" cy="12.2" r="0.5" fill="#8d9295"/></svg>
<div class="a" style="left:138px;top:192px;width:1px;height:24px;background:#bfc5c7"></div>
<div class="a" style="left:171px;top:192px;width:1px;height:24px;background:#bfc5c7"></div>
<div class="a" style="left:228px;top:192px;width:1px;height:24px;background:#bfc5c7"></div>
<svg style="left:146.6px;top:195.4px" width="15" height="17" viewBox="0 0 15 17" ><path d="M3.6,2 H10.4 V5.6 L13.6,7.6 V12.6 L10.4,14 V15.6 L3.6,13.6 Z" fill="#d9b36e" stroke="#b48c49" stroke-width="0.5"/><path d="M3,3.6 L9.4,1.6 V15.8 L3,13.6 Z" fill="#fbe9c4" stroke="#c99f58" stroke-width="0.6"/><g stroke="#f39a1e" stroke-width="1"><path d="M3.4,0.2 V6.6 M0.2,3.4 H6.6 M1.1,1.1 L5.7,5.7 M5.7,1.1 L1.1,5.7"/></g><circle cx="3.4" cy="3.4" r="1.2" fill="#fff6dd"/></svg>
<svg style="left:180.6px;top:196px" width="17" height="17" viewBox="0 0 17 17" ><path d="M2.5,3.8 V13" stroke="#2e3336" stroke-width="0.9"/><rect x="0.7" y="0.6" width="3.4" height="3.2" fill="#fff" stroke="#2e3336" stroke-width="0.9"/><rect x="0.7" y="6.6" width="3.4" height="3.2" fill="#7fd0f2" stroke="#14628c" stroke-width="0.9"/><rect x="0.7" y="12.6" width="3.4" height="3.2" fill="#fff" stroke="#2e3336" stroke-width="0.9"/><path d="M6.4,8.2 H15.8 L12.2,12 V15.8 H10 V12 Z" fill="#45494c"/></svg>
<svg style="left:204.8px;top:196.8px" width="16" height="16" viewBox="0 0 16 16" ><rect x="0.6" y="0.6" width="12.4" height="13" fill="#fff" stroke="#14628c" stroke-width="1"/><rect x="1" y="1" width="3.8" height="12.4" fill="#7fd0f2"/><path d="M4.8,0.6 V13.6 M8.8,0.6 V6 M0.6,3.2 H13" stroke="#14628c" stroke-width="1"/><rect x="4.8" y="0.6" width="8.2" height="2.6" fill="none" stroke="#3b3f42" stroke-width="1"/><path d="M6.8,6.4 H12 L14.8,9.2 V14.8 H6.8 Z" fill="#e9ebec" stroke="#7f8487" stroke-width="0.9"/><path d="M8.4,10.2 H9.2 M10.2,10.2 H13 M8.4,12.6 H9.2 M10.2,12.6 H13" stroke="#5f6467" stroke-width="0.9"/></svg>
<svg style="left:236.4px;top:200.4px" width="9" height="6.4" viewBox="0 0 9 6.4" ><path d="M0.8,0.6 L3.8,3.1 L0.8,5.6 M4.8,0.6 L7.8,3.1 L4.8,5.6" fill="none" stroke="#2e3336" stroke-width="1.1"/></svg>
<svg style="left:255.6px;top:196px" width="16" height="18" viewBox="0 0 16 18" ><defs><linearGradient id="dc" x1="0" y1="0" x2="1" y2="1"><stop offset="0.3" stop-color="#f7f9fa"/><stop offset="1" stop-color="#c3d3dc"/></linearGradient></defs><path d="M0.6,0.6 H8.8 L13.4,5 V15.6 H0.6 Z" fill="url(#dc)" stroke="#d0d6d9" stroke-width="0.7"/><path d="M8.8,0.6 V5 H13.4 Z" fill="#dfe6ea"/><circle cx="3.4" cy="7.2" r="1" fill="none" stroke="#9aa1a4" stroke-width="0.7"/><circle cx="3.4" cy="11.4" r="1" fill="none" stroke="#9aa1a4" stroke-width="0.7"/><path d="M5.6,7.2 H11 M5.6,11.4 H11" stroke="#9aa1a4" stroke-width="0.8"/><polygon points="15.6,15.4 15.6,17.8 13.2,17.8" fill="#4a4f52"/></svg>
<svg style="left:11.6px;top:226px" width="17" height="15" viewBox="0 0 17 15" ><defs><linearGradient id="fn" x1="0" y1="0" x2="1" y2="0"><stop offset="0" stop-color="#fff"/><stop offset="1" stop-color="#b9bec0"/></linearGradient></defs><path d="M0.8,0.8 H16 L9.8,8 V13.6 H7 V8 Z" fill="url(#fn)" stroke="#5a5f62" stroke-width="1"/><path d="M1.4,0.9 H15.4" stroke="#3f4447" stroke-width="1.2"/></svg>
<div class="a" style="left:32px;top:220px;width:200px;height:27px;box-sizing:border-box;background:#fff;border:1px solid #9fb1b9"></div>
<svg style="left:217.6px;top:229.6px" width="9" height="8" viewBox="0 0 9 8" ><path d="M0.6,0.5 L8,7.2 M8,0.5 L0.6,7.2" stroke="#a0a5a8" stroke-width="0.9"/></svg>
<svg style="left:237.9px;top:230.8px" width="7.2" height="4.4" viewBox="0 0 7.2 4.4"><polygon points="0,0 7.2,0 3.6,4.4" fill="#555c5f"/></svg>
<div class="a" style="left:257px;top:231.4px;width:11px;height:2.4px;background:#9a9fa2"></div><div class="a" style="left:261.3px;top:227.4px;width:2.4px;height:10.6px;background:#9a9fa2"></div>
<div class="a" style="left:19px;top:272px;width:1px;height:4px;background:#c6cacb"></div>
<div class="a" style="left:19px;top:283px;width:1px;height:82px;background:#c6cacb"></div>
<div class="a" style="left:19px;top:374px;width:1px;height:14px;background:#c6cacb"></div>
<div class="a" style="left:19px;top:297px;width:9px;height:1px;background:#c6cacb"></div>
<div class="a" style="left:19px;top:315px;width:9px;height:1px;background:#c6cacb"></div>
<div class="a" style="left:19px;top:333px;width:9px;height:1px;background:#c6cacb"></div>
<div class="a" style="left:19px;top:351px;width:9px;height:1px;background:#c6cacb"></div>
<div class="a" style="left:19px;top:387px;width:9px;height:1px;background:#c6cacb"></div>
<svg style="left:17px;top:275.6px" width="5" height="8" viewBox="0 0 5 8" ><polygon points="0.2,0.2 4,3.6 0.2,7" fill="#4f5558"/></svg>
<svg style="left:17px;top:365.6px" width="5" height="8" viewBox="0 0 5 8" ><polygon points="0.2,0.2 4,3.6 0.2,7" fill="#4f5558"/></svg>
<svg style="left:11.6px;top:254.6px" width="14" height="13" viewBox="0 0 14 13" ><polygon points="0.6,3 2.6,0.8 13,0.8 13,9.6 11,11.8 0.6,11.8" fill="#1f8fc5"/><polygon points="0.6,3 2.6,0.8 13,0.8 11,3" fill="#8fd3f0"/><polygon points="11,3 13,0.8 13,9.6 11,11.8" fill="#2a8cc0"/><rect x="1.2" y="3.4" width="9.4" height="7.9" fill="#b8e6f8"/></svg>
<svg style="left:32.4px;top:271px" width="14" height="15.4" viewBox="0 0 14 15.4" ><rect x="0.6" y="0.6" width="12.8" height="14" fill="#fbfcfc" stroke="#b9bec0" stroke-width="0.8"/><rect x="0.6" y="0.4" width="12.8" height="1.2" fill="#2a8cc0"/><rect x="2" y="2.8" width="2.6" height="2.6" fill="#fff" stroke="#1779b0" stroke-width="0.9"/><path d="M6.4,3.4 H11.6 M6.4,5.0 H10.6" stroke="#a5aaad" stroke-width="0.7"/><rect x="2" y="6.4" width="2.6" height="2.6" fill="#fff" stroke="#1779b0" stroke-width="0.9"/><path d="M6.4,7.0 H11.6 M6.4,8.600000000000001 H10.6" stroke="#a5aaad" stroke-width="0.7"/><rect x="2" y="10" width="2.6" height="2.6" fill="#fff" stroke="#1779b0" stroke-width="0.9"/><path d="M6.4,10.6 H11.6 M6.4,12.2 H10.6" stroke="#a5aaad" stroke-width="0.7"/></svg>
<svg style="left:31px;top:291.4px" width="16" height="11" viewBox="0 0 16 11" ><polygon points="4.6,1 14.6,1 11,9.2 1,9.2" fill="none" stroke="#8c6d2f" stroke-width="1.1"/></svg>
<svg style="left:31px;top:309.4px" width="16" height="11" viewBox="0 0 16 11" ><polygon points="4.6,1 14.6,1 11,9.2 1,9.2" fill="none" stroke="#8c6d2f" stroke-width="1.1"/></svg>
<svg style="left:31px;top:327.4px" width="16" height="11" viewBox="0 0 16 11" ><polygon points="4.6,1 14.6,1 11,9.2 1,9.2" fill="none" stroke="#8c6d2f" stroke-width="1.1"/></svg>
<svg style="left:31px;top:343px" width="18" height="18" viewBox="0 0 18 18" ><path d="M6.2,10.9 V1.6 M6.2,10.9 H15.4 M6.2,10.9 L1.4,15.6" stroke="#8c6d2f" stroke-width="1.2" fill="none"/><polygon points="6.2,0.4 4.7,2.8 7.7,2.8" fill="#8c6d2f"/><polygon points="16.6,10.9 14.2,9.4 14.2,12.4" fill="#8c6d2f"/><polygon points="0.5,16.6 1.2,13.9 3.2,15.9" fill="#8c6d2f"/></svg>
<svg style="left:31px;top:361.6px" width="16" height="16" viewBox="0 0 16 16" ><polygon points="0.8,6.2 5.6,1.4 14.6,1.4 14.6,9.4 9.8,14.4 0.8,14.4" fill="#a6dc8c"/><polygon points="0.8,6.2 5.6,1.4 14.6,1.4 9.8,6.2" fill="#9ad57f"/><polygon points="9.8,6.2 14.6,1.4 14.6,9.4 9.8,14.4" fill="#8ccb70"/><path d="M0.8,6.2 H9.8 V14.4 H7.2 V8.8 H3.4 V14.4 H0.8 Z" fill="#f1f2f3" stroke="#c1c4c5" stroke-width="0.5"/><polygon points="3.4,14.4 3.4,8.8 7.2,8.8 7.2,10.6 5.4,12.4 5.4,14.4" fill="#8bcb70"/><path d="M6,3.6 L12.6,3" stroke="#d6f5c6" stroke-width="1"/></svg>
<svg style="left:30.4px;top:379.2px" width="17" height="16" viewBox="0 0 17 16" ><defs><linearGradient id="pch" x1="0" y1="0" x2="1" y2="0"><stop offset="0" stop-color="#aeb2b4"/><stop offset="0.5" stop-color="#f7f8f9"/><stop offset="1" stop-color="#a5c3d6"/></linearGradient></defs><polygon points="5.4,0.1 12.7,0.1 9,8.5" fill="url(#pch)"/><path d="M1.6,10.5 H5.6 L9,14 L12.4,10.5 H16.5 V15.8 H1.6 Z" fill="#d2d4d5" stroke="#a3a7a9" stroke-width="0.7"/><path d="M0.5,5.1 H3.2 L9,10.9 L14.6,5.1 H16.5" fill="none" stroke="#ffffff" stroke-width="2.4"/><path d="M0.5,3.6 H3.3 L9,9.5 L14.4,3.6 H16.5" fill="none" stroke="#5fc03a" stroke-width="1.4"/><path d="M0.5,6.4 H3 L9,11.9 L14.8,6.4 H16.5" fill="none" stroke="#5d6164" stroke-width="0.8"/></svg>
<div class="a" style="left:12px;top:402px;width:263px;height:1.6px;background:#52b830"></div>
<svg style="left:10.6px;top:399.6px" width="4" height="6.4" viewBox="0 0 4 6.4" ><polygon points="0.4,0.2 3.4,3.2 0.4,6.2" fill="#52b830"/></svg>
<svg style="left:272.6px;top:399.6px" width="4" height="6.4" viewBox="0 0 4 6.4" ><polygon points="3.2,0.2 3.2,6.2 0.2,3.2" fill="#52b830"/></svg>
<!-- toolbar -->
<div class="a" style="left:851px;top:169px;width:500px;height:32px;box-sizing:border-box;background:#f5f7f9;border:1px solid #a3a8ab"></div>
<div class="a" style="left:1038px;top:174px;width:23px;height:23px;box-sizing:border-box;background:#dcdfe1;border:1px solid #b4b9bc"></div>
<svg style="left:858px;top:176px" width="20" height="18" viewBox="0 0 20 18" ><path d="M0.9999999999999991,6 Q8.2,-2.1999999999999993 15.399999999999999,6 Q8.2,14.2 0.9999999999999991,6 Z" fill="#3a3e41"/><circle cx="8.2" cy="6" r="2.60" fill="#fff"/><circle cx="8.2" cy="6" r="1.10" fill="#3a3e41"/><rect x="8.3" y="12.28" width="8.8" height="4.52" rx="0.8" fill="#3a3e41"/><rect x="11.12" y="11" width="3.17" height="1.74" fill="#3a3e41"/><circle cx="12.70" cy="14.60" r="1.57" fill="#d9dcde"/><circle cx="12.70" cy="14.60" r="0.81" fill="#3a3e41"/></svg>
<svg style="left:872.8px;top:174.2px" width="5.4" height="5" viewBox="0 0 5.4 5"><polygon points="0,0 5.4,0 5.4,5" fill="#1e88e5"/></svg>
<svg style="left:884px;top:176px" width="20" height="18" viewBox="0 0 20 18" ><path d="M1,5 Q8,-2.4000000000000004 15,5 Q8,12.4 1,5 Z" fill="#a9adaf"/><circle cx="8" cy="5" r="2.60" fill="#e9ebec"/><circle cx="8" cy="5" r="1.10" fill="#a9adaf"/><circle cx="12" cy="11.4" r="4.6" fill="#eceeef" stroke="#c0c4c6" stroke-width="1"/><path d="M12,8.6 V11.6 H14.2" stroke="#aeb2b4" stroke-width="0.9" fill="none"/><polygon points="5.4,10.6 8.2,8.4 8.2,12.8" fill="#b9bdbf"/></svg>
<svg style="left:898.9px;top:174.2px" width="5.4" height="5" viewBox="0 0 5.4 5"><polygon points="0,0 5.4,0 5.4,5" fill="#1e88e5"/></svg>
<svg style="left:910.6px;top:177px" width="17" height="17" viewBox="0 0 17 17" ><rect x="0.8" y="0.8" width="14" height="13.4" fill="#fafbfc" stroke="#b0b5b8" stroke-width="0.9"/><rect x="0.8" y="0.5" width="14" height="1" fill="#a3a8ab"/><circle cx="7.8" cy="7.4" r="4.3" fill="#e6f4fb" stroke="#1f7fb0" stroke-width="1"/><path d="M11,10.8 L15,15" stroke="#9a9fa2" stroke-width="2.2"/><path d="M11.2,11 L14.8,14.8" stroke="#e9ebec" stroke-width="0.9"/></svg>
<svg style="left:936.6px;top:176.8px" width="17" height="17" viewBox="0 0 17 17" ><circle cx="6.4" cy="6.4" r="5.4" fill="#f2f9fd" stroke="#2a8cc0" stroke-width="1"/><path d="M10.6,10.8 L15.2,15.4" stroke="#9a9fa2" stroke-width="2.3"/><path d="M10.9,11.1 L15,15.2" stroke="#eceeef" stroke-width="0.9"/><path d="M3.4,6.4 H9.4" stroke="#14628c" stroke-width="1.8"/><path d="M6.4,3.4 V9.4" stroke="#14628c" stroke-width="1.8"/></svg>
<svg style="left:962.6px;top:176.8px" width="17" height="17" viewBox="0 0 17 17" ><circle cx="6.4" cy="6.4" r="5.4" fill="#f2f9fd" stroke="#2a8cc0" stroke-width="1"/><path d="M10.6,10.8 L15.2,15.4" stroke="#9a9fa2" stroke-width="2.3"/><path d="M10.9,11.1 L15,15.2" stroke="#eceeef" stroke-width="0.9"/><path d="M3.4,6.4 H9.4" stroke="#14628c" stroke-width="1.8"/></svg>
<svg style="left:989px;top:177px" width="17" height="17" viewBox="0 0 17 17" ><defs><linearGradient id="rp" x1="0" y1="0" x2="1" y2="1"><stop offset="0" stop-color="#d6eef8"/><stop offset="1" stop-color="#3f9cc4"/></linearGradient></defs><rect x="0.6" y="0.8" width="15" height="14.4" fill="url(#rp)" stroke="#a9aeb1" stroke-width="0.8"/><rect x="0.6" y="0.5" width="15" height="1.1" fill="#9a9fa2"/><path d="M1,4 C6,3.4 10,5.4 12,7.6 L4,14.8 H1 Z" fill="#fff"/><path d="M3.6,14.6 L13,6.2" stroke="#14628c" stroke-width="1.5"/></svg>
<svg style="left:1014.6px;top:176.6px" width="18" height="18" viewBox="0 0 18 18" ><polygon points="0.8,5 4.6,0.8 16,0.8 16,11.6 12.4,15.6 0.8,15.6" fill="#7fbfe0" stroke="#14628c" stroke-width="1"/><polygon points="0.8,5 4.6,0.8 16,0.8 12.4,5" fill="#cfeaf6" stroke="#14628c" stroke-width="0.8"/><rect x="0.8" y="5" width="11.6" height="10.6" fill="#fff" stroke="#14628c" stroke-width="1.1"/></svg>
<svg style="left:1030.4px;top:192px" width="2.8" height="2.8" viewBox="0 0 2.8 2.8"><polygon points="2.8,0 2.8,2.8 0,2.8" fill="#4a4f52"/></svg>
<svg style="left:1040px;top:176px" width="20" height="19" viewBox="0 0 20 19" ><path d="M0.8,1.7 H8.6 C13.2,1.7 15.6,5.4 15.8,10.4" fill="none" stroke="#4a4f52" stroke-width="1.2"/><path d="M0.8,5 H4.4 C7.6,5 9.2,8.6 9.3,12.4" fill="none" stroke="#4a4f52" stroke-width="1.2"/><path d="M5,5 L8.3,1.7 M10.6,11.2 L15,6.8" stroke="#1f7fb0" stroke-width="1"/><path d="M7.700000000000001,14.6 Q12.3,10.399999999999999 16.9,14.6 Q12.3,18.8 7.700000000000001,14.6 Z" fill="#3a3e41"/><circle cx="12.3" cy="14.6" r="1.51" fill="#fff"/><circle cx="12.3" cy="14.6" r="0.63" fill="#3a3e41"/></svg>
<svg style="left:1055px;top:174.4px" width="5.4" height="5" viewBox="0 0 5.4 5"><polygon points="0,0 5.4,0 5.4,5" fill="#1e88e5"/></svg>
<svg style="left:1066.6px;top:177px" width="18" height="17" viewBox="0 0 18 17" ><polygon points="0.8,7 4,0.8 13.4,0.8 16.4,7 13.4,14.6 4,14.6" fill="#dff1fa" stroke="#4aa8d6" stroke-width="1"/><path d="M0.8,7 H10 L13.4,0.8 M10,7 L13.4,14.6" fill="none" stroke="#4aa8d6" stroke-width="0.9"/><path d="M13,1.2 C10.6,3.6 9.8,6 10.6,8.4 H15.6 C16.6,6 15.6,3.4 13,1.2 Z" fill="#5fa8cf"/><rect x="10.6" y="9.6" width="5.2" height="6" fill="#f7f8f9" stroke="#6a6f72" stroke-width="0.7"/><path d="M12,11.6 H14.4 M12,13.6 H14.4" stroke="#4a4f52" stroke-width="0.9"/></svg>
<svg style="left:1082.4px;top:192px" width="2.8" height="2.8" viewBox="0 0 2.8 2.8"><polygon points="2.8,0 2.8,2.8 0,2.8" fill="#4a4f52"/></svg>
<svg style="left:1092.6px;top:177px" width="18" height="17" viewBox="0 0 18 17" ><rect x="0.6" y="0.6" width="13.4" height="14" fill="#fafbfb" stroke="#b6babc" stroke-width="0.8"/><rect x="0.6" y="0.4" width="13.4" height="1.2" fill="#8d9295"/><path d="M0.6,4 H14 M0.6,7.2 H14 M0.6,10.4 H14 M0.6,13.2 H7 M4,0.6 V14.6" stroke="#bfc3c5" stroke-width="0.8"/><path d="M0.6,14.4 H6" stroke="#7fbde0" stroke-width="1"/><rect x="5.6" y="9.47" width="10.4" height="5.93" rx="0.8" fill="#3a3e41"/><rect x="8.93" y="7.8" width="3.74" height="2.28" fill="#3a3e41"/><circle cx="10.80" cy="12.51" r="2.05" fill="#d9dcde"/><circle cx="10.80" cy="12.51" r="1.06" fill="#3a3e41"/></svg>
<svg style="left:1118.6px;top:176.6px" width="18" height="18" viewBox="0 0 18 18" ><polygon points="0.8,4.6 5.6,1 16.2,1.2 15,14 10.4,16 2.6,11.6" fill="#a9d6ea" stroke="#6fb4d4" stroke-width="0.9"/><polygon points="5,5.6 12.6,5.2 12,12.8 6,11" fill="#d6edf7" stroke="#6fb4d4" stroke-width="0.8"/><path d="M0.8,4.6 L5,5.6 M16.2,1.2 L12.6,5.2 M15,14 L12,12.8 M2.6,11.6 L6,11" stroke="#6fb4d4" stroke-width="0.8"/><polygon points="6,11 12,12.8 10.4,16 2.6,11.6" fill="#7fbcd8"/></svg>
<svg style="left:1145px;top:176.6px" width="18" height="18" viewBox="0 0 18 18" ><polygon points="1,4.4 4.2,1.2 13.6,1.2 10.6,4.4" fill="#a9dff6"/><polygon points="1,4.4 10.6,4.4 1,14.6" fill="#e6f5fc" stroke="#bfe3f4" stroke-width="0.5"/><path d="M0.8,15.6 L16,0.8" stroke="#14628c" stroke-width="1.3"/><path d="M14.6,3.4 V14.8 H2.6" fill="none" stroke="#9a9fa2" stroke-width="0.9" stroke-dasharray="1,1.2"/><path d="M13.2,5 V13.6 M11.8,7 V13.6" stroke="#b9bec0" stroke-width="0.8" stroke-dasharray="1,1.2"/></svg>
<svg style="left:1160.6px;top:192px" width="2.8" height="2.8" viewBox="0 0 2.8 2.8"><polygon points="2.8,0 2.8,2.8 0,2.8" fill="#4a4f52"/></svg>
<svg style="left:1170px;top:176px" width="19" height="19" viewBox="0 0 19 19" ><path d="M0.6,1 L4.4,4.4 M4.4,1 L0.6,4.4" stroke="#8c6d2f" stroke-width="1.3"/><path d="M11.3,1.2 L9.5,4.2 M8.5,7.4 L6.2,10.8 M6.2,13 L3.8,16.8" stroke="#8c6d2f" stroke-width="1.6"/><path d="M11.7,8.4 V12.3 H16.2 M11.7,12.3 L8.8,15" stroke="#8c6d2f" stroke-width="1.1" fill="none"/><polygon points="11.7,6.8 10.2,9.2 13.2,9.2" fill="#8c6d2f"/><polygon points="17.4,12.3 15,10.8 15,13.8" fill="#8c6d2f"/><polygon points="7.8,16 8.4,13.4 10.4,15.4" fill="#8c6d2f"/></svg>
<svg style="left:1186.4px;top:192px" width="2.8" height="2.8" viewBox="0 0 2.8 2.8"><polygon points="2.8,0 2.8,2.8 0,2.8" fill="#4a4f52"/></svg>
<svg style="left:1197px;top:177.4px" width="17" height="17" viewBox="0 0 17 17" ><defs><radialGradient id="bg1" cx="0.35" cy="0.3" r="0.8"><stop offset="0" stop-color="#a8d79a"/><stop offset="1" stop-color="#4f9a45"/></radialGradient><radialGradient id="bg2" cx="0.35" cy="0.3" r="0.8"><stop offset="0" stop-color="#f3a8a3"/><stop offset="1" stop-color="#d9534f"/></radialGradient><radialGradient id="bg3" cx="0.35" cy="0.3" r="0.8"><stop offset="0" stop-color="#7fc3e3"/><stop offset="1" stop-color="#1f7fb0"/></radialGradient></defs><path d="M3.2,3 L8,7.8 L3.2,13 M8,7.8 H13.4" fill="none" stroke="#2e3336" stroke-width="1.1"/><circle cx="3.2" cy="3" r="2.6" fill="url(#bg1)"/><circle cx="13.2" cy="7.8" r="2.6" fill="url(#bg2)"/><circle cx="3.2" cy="13" r="2.6" fill="url(#bg3)"/></svg>
<svg style="left:1222.6px;top:176.8px" width="20" height="19" viewBox="0 0 20 19" ><rect x="0.6" y="0.8" width="9.2" height="5.4" fill="#fef3dc" stroke="#9a9fa2" stroke-width="0.8"/><path d="M9.8,3.2 H15.4 V7.4" fill="none" stroke="#2e3336" stroke-width="1.1"/><polygon points="12.4,6.2 15.4,9.4 16.8,5.4" fill="#2e3336"/><path d="M7.000000000000001,13.4 Q11.8,9.2 16.6,13.4 Q11.8,17.6 7.000000000000001,13.4 Z" fill="#3a3e41"/><circle cx="11.8" cy="13.4" r="1.51" fill="#fff"/><circle cx="11.8" cy="13.4" r="0.63" fill="#3a3e41"/></svg>
<svg style="left:1238.8px;top:192px" width="2.8" height="2.8" viewBox="0 0 2.8 2.8"><polygon points="2.8,0 2.8,2.8 0,2.8" fill="#4a4f52"/></svg>
<svg style="left:1248.6px;top:176.4px" width="18" height="18" viewBox="0 0 18 18" ><path d="M1,1.2 H11.6 V4.6 H14.6 V11 H1 Z" fill="#d8f0cb" stroke="#5fc03a" stroke-width="1.2"/><path d="M1.6,1.4 L6.4,6" stroke="#14628c" stroke-width="0.9"/><path d="M3,9 H13 M6.4,6 V9.4 M9.6,3 V8" stroke="#3f8f2a" stroke-width="0.8" stroke-dasharray="0.8,1.2"/><circle cx="6.4" cy="13.2" r="2.8" fill="#f3f5f6" stroke="#3a3e41" stroke-width="1"/><circle cx="13" cy="13.2" r="2.8" fill="#f3f5f6" stroke="#3a3e41" stroke-width="1"/><path d="M9.2,12.6 Q9.7,11.8 10.2,12.6" fill="none" stroke="#3a3e41" stroke-width="0.9"/></svg>
<svg style="left:1274.6px;top:176.6px" width="18" height="17" viewBox="0 0 18 17" ><path d="M8.4,2 L15.2,14 H1.6 Z" fill="none" stroke="#bcc0c2" stroke-width="3.2" stroke-linejoin="round"/><path d="M8.4,5.6 L12.2,12.2 H4.8 Z" fill="#f5f7f9"/><polygon points="11.6,10.6 15.8,13 11.6,15.6" fill="#d5d8da" stroke="#b9bdbf" stroke-width="0.6"/></svg>
<div class="a" style="left:1303px;top:179px;width:3.6px;height:10.8px;background:#a9adaf"></div><div class="a" style="left:1310px;top:179px;width:3.8px;height:10.8px;background:#a9adaf"></div>
<svg style="left:1326.4px;top:179px" width="17" height="11.4" viewBox="0 0 17 11.4" ><defs><linearGradient id="gy" x1="0" y1="0" x2="1" y2="0"><stop offset="0" stop-color="#b4b8ba"/><stop offset="1" stop-color="#d9dcdd"/></linearGradient></defs><path d="M0.6,0.6 H16 V10.8 H3.4 C6.6,8.8 6.6,3.6 0.6,2.4 Z" fill="url(#gy)"/></svg>
<svg style="left:950px;top:217px" width="14" height="22" viewBox="0 0 14 22" ><path d="M1.3,1.6 L1.3,15.6 L4.6,12.9 L7,18.4 Q8.4,19 9.2,17.4 L6.9,12.2 L12,11.6 Z" fill="#f3f3f3" stroke="#3f4143" stroke-width="1.3" stroke-linejoin="round"/></svg>
<!-- model -->
<svg style="left:0;top:0" width="1920" height="1080" viewBox="0 0 1920 1080">
<defs><linearGradient id="cyl" gradientUnits="userSpaceOnUse" x1="1036" y1="755" x2="1072" y2="766"><stop offset="0" stop-color="#84a08d"/><stop offset="0.3" stop-color="#98b5a1"/><stop offset="0.7" stop-color="#a3bfac"/><stop offset="1" stop-color="#a0bca9"/></linearGradient><linearGradient id="cres" gradientUnits="userSpaceOnUse" x1="1196" y1="720" x2="1218" y2="727"><stop offset="0" stop-color="#9dbaa6"/><stop offset="1" stop-color="#a9c4b1"/></linearGradient></defs>
<polygon points="1036.7,754.8 1037.6,752.6 1038.7,750.4 1040.1,748.3 1041.7,746.3 1043.6,744.5 1045.7,742.7 1048.1,741.2 1050.6,739.7 1053.4,738.5 1056.3,737.4 1059.5,736.4 1062.8,735.6 1066.2,735.0 1069.8,734.6 1073.5,734.3 1077.3,734.2 1154.5,482.8 1150.6,482.9 1146.9,483.2 1143.3,483.6 1139.8,484.2 1136.4,484.9 1133.3,485.9 1130.3,487.0 1127.5,488.2 1124.9,489.6 1122.5,491.2 1120.4,492.9 1118.5,494.7 1116.8,496.7 1115.4,498.8 1114.3,501.0 1113.4,503.2" fill="url(#cyl)" />
<polygon points="1077.3,734.2 1195.8,734.2 1274.5,483.6 1154.5,482.8" fill="#9dbaa6" />
<polygon points="1215.0,714.1 1215.8,716.1 1216.4,718.0 1216.6,719.9 1216.6,721.8 1216.2,723.6 1215.6,725.3 1214.7,726.9 1213.5,728.3 1212.0,729.6 1210.3,730.8 1208.4,731.8 1206.2,732.7 1203.8,733.3 1201.3,733.8 1198.6,734.1 1195.8,734.2 1274.5,483.6 1277.4,483.5 1280.1,483.2 1282.6,482.8 1285.0,482.1 1287.2,481.3 1289.2,480.3 1290.9,479.1 1292.4,477.8 1293.6,476.4 1294.5,474.8 1295.2,473.1 1295.5,471.3 1295.6,469.5 1295.3,467.5 1294.8,465.6 1293.9,463.6" fill="url(#cres)" />
<polygon points="1120.8,754.3 1096.6,832.8 1068.0,774.4 1067.2,772.4 1066.6,770.5 1066.4,768.6 1066.4,766.7 1066.8,764.9 1067.4,763.2 1068.3,761.6 1069.5,760.2 1071.0,758.9 1072.7,757.7 1074.6,756.7 1076.8,755.8 1079.2,755.2 1081.7,754.7 1084.4,754.4 1087.1,754.3" fill="#566659" />
<polygon points="1156.8,535.2 1244.0,714.1 1323.3,463.8 1234.5,283.4" fill="#566659" />
<polygon points="1244.0,714.1 1244.6,715.4 1245.1,716.7 1245.6,717.9 1246.0,719.2 1246.4,720.5 1246.7,721.7 1246.9,723.0 1247.1,724.2 1247.2,725.4 1247.3,726.7 1247.2,727.9 1247.2,729.0 1247.0,730.2 1246.8,731.4 1246.6,732.5 1246.3,733.7 1325.6,483.4 1325.9,482.2 1326.2,481.1 1326.4,479.9 1326.5,478.8 1326.6,477.6 1326.6,476.4 1326.5,475.1 1326.4,473.9 1326.2,472.7 1326.0,471.4 1325.7,470.2 1325.3,468.9 1324.9,467.6 1324.4,466.4 1323.9,465.1 1323.3,463.8" fill="#58695c" />
<polygon points="1127.5,533.9 1156.8,535.2 1234.5,283.4 1205.5,283.4" fill="#9dbaa6" />
<polygon points="1127.5,533.9 1156.8,535.2 1244.0,714.1 1245.7,718.0 1246.7,721.9 1247.2,725.8 1247.1,729.5 1246.4,733.1 1245.2,736.4 1243.3,739.6 1240.9,742.5 1238.0,745.2 1234.6,747.5 1230.7,749.6 1226.4,751.2 1221.7,752.6 1216.6,753.5 1211.3,754.1 1205.7,754.3 1087.1,754.3 1084.4,754.4 1081.7,754.7 1079.2,755.2 1076.8,755.8 1074.6,756.7 1072.7,757.7 1071.0,758.9 1069.5,760.2 1068.3,761.6 1067.4,763.2 1066.8,764.9 1066.4,766.7 1066.4,768.6 1066.6,770.5 1067.2,772.4 1068.0,774.4 1096.6,832.8 1067.6,832.8 1039.0,774.4 1037.3,770.5 1036.3,766.6 1035.8,762.7 1035.9,759.0 1036.6,755.4 1037.8,752.1 1039.7,748.9 1042.1,746.0 1045.0,743.3 1048.4,741.0 1052.3,738.9 1056.6,737.3 1061.3,735.9 1066.4,735.0 1071.7,734.4 1077.3,734.2 1195.8,734.2 1198.6,734.1 1201.3,733.8 1203.8,733.3 1206.2,732.7 1208.4,731.8 1210.3,730.8 1212.0,729.6 1213.5,728.3 1214.7,726.9 1215.6,725.3 1216.2,723.6 1216.6,721.8 1216.6,719.9 1216.4,718.0 1215.8,716.1 1215.0,714.1" fill="#697f70" />
<polyline points="1205.5,283.4 1127.5,533.9 1156.8,535.2 1234.5,283.4" fill="none" stroke="#0c120e" stroke-width="0.9" shape-rendering="crispEdges" />
<polyline points="1205.5,283.4 1234.5,283.4" fill="none" stroke="#44584a" stroke-width="0.9" shape-rendering="crispEdges" />
<polyline points="1156.8,535.2 1244.0,714.1" fill="none" stroke="#0c120e" stroke-width="0.9" shape-rendering="crispEdges" />
<polyline points="1244.0,714.1 1323.3,463.8" fill="none" stroke="#0c120e" stroke-width="0.9" shape-rendering="crispEdges" />
<polyline points="1234.5,283.4 1323.3,463.8 1323.9,465.1 1324.4,466.4 1324.9,467.6 1325.3,468.9 1325.7,470.2 1326.0,471.4 1326.2,472.7 1326.4,473.9 1326.5,475.1 1326.6,476.4 1326.6,477.6 1326.5,478.8 1326.4,479.9 1326.2,481.1 1325.9,482.2 1325.6,483.4" fill="none" stroke="#0c120e" stroke-width="0.9" shape-rendering="crispEdges" />
<polyline points="1244.0,714.1 1245.7,718.0 1246.7,721.9 1247.2,725.8 1247.1,729.5 1246.4,733.1 1245.2,736.4 1243.3,739.6 1240.9,742.5 1238.0,745.2 1234.6,747.5 1230.7,749.6 1226.4,751.2 1221.7,752.6 1216.6,753.5 1211.3,754.1 1205.7,754.3" fill="none" stroke="#0c120e" stroke-width="0.9" shape-rendering="crispEdges" />
<polyline points="1127.5,533.9 1215.0,714.1 1215.8,716.1 1216.4,718.0 1216.6,719.9 1216.6,721.8 1216.2,723.6 1215.6,725.3 1214.7,726.9 1213.5,728.3 1212.0,729.6 1210.3,730.8 1208.4,731.8 1206.2,732.7 1203.8,733.3 1201.3,733.8 1198.6,734.1 1195.8,734.2" fill="none" stroke="#0c120e" stroke-width="0.9" shape-rendering="crispEdges" />
<polyline points="1215.0,714.1 1244.0,714.1" fill="none" stroke="#0c120e" stroke-width="0.9" shape-rendering="crispEdges" />
<polyline points="1195.8,734.2 1205.7,754.3" fill="none" stroke="#0c120e" stroke-width="0.9" shape-rendering="crispEdges" />
<polyline points="1195.8,734.2 1077.3,734.2" fill="none" stroke="#0c120e" stroke-width="0.9" shape-rendering="crispEdges" />
<polyline points="1205.7,754.3 1087.1,754.3" fill="none" stroke="#0c120e" stroke-width="0.9" shape-rendering="crispEdges" />
<polyline points="1195.8,734.2 1207.2,698.1" fill="none" stroke="#0c120e" stroke-width="0.9" shape-rendering="crispEdges" />
<polyline points="1039.0,774.4 1037.3,770.5 1036.3,766.6 1035.8,762.7 1035.9,759.0 1036.6,755.4 1037.8,752.1 1039.7,748.9 1042.1,746.0 1045.0,743.3 1048.4,741.0 1052.3,738.9 1056.6,737.3 1061.3,735.9 1066.4,735.0 1071.7,734.4 1077.3,734.2" fill="none" stroke="#2fd02f" stroke-width="1.0" shape-rendering="crispEdges" />
<polyline points="1115.7,522.8 1114.0,518.9 1112.9,514.9 1112.4,511.1 1112.5,507.4 1113.2,503.8 1114.5,500.5 1116.4,497.3 1118.8,494.4 1121.8,491.8 1125.2,489.4 1129.2,487.4 1133.5,485.8 1138.3,484.5 1143.4,483.5 1148.8,483.0 1154.5,482.8" fill="none" stroke="#2fd02f" stroke-width="1.0" shape-rendering="crispEdges" />
<polyline points="1077.3,734.2 1087.1,754.3" fill="none" stroke="#2fd02f" stroke-width="1.0" shape-rendering="crispEdges" />
<polyline points="1154.5,482.8 1164.5,503.0" fill="none" stroke="#2fd02f" stroke-width="1.0" shape-rendering="crispEdges" />
<polyline points="1068.0,774.4 1067.2,772.4 1066.6,770.5 1066.4,768.6 1066.4,766.7 1066.8,764.9 1067.4,763.2 1068.3,761.6 1069.5,760.2 1071.0,758.9 1072.7,757.7 1074.6,756.7 1076.8,755.8 1079.2,755.2 1081.7,754.7 1084.4,754.4 1087.1,754.3" fill="none" stroke="#2fd02f" stroke-width="1.0" shape-rendering="crispEdges" />
<polyline points="1145.1,523.0 1144.2,521.0 1143.7,519.1 1143.4,517.1 1143.5,515.3 1143.8,513.5 1144.5,511.8 1145.4,510.2 1146.6,508.8 1148.1,507.5 1149.8,506.3 1151.8,505.3 1154.0,504.5 1156.4,503.8 1158.9,503.4 1161.6,503.1 1164.5,503.0" fill="none" stroke="#2fd02f" stroke-width="1.0" shape-rendering="crispEdges" />
<polyline points="1068.0,774.4 1039.0,774.4" fill="none" stroke="#2fd02f" stroke-width="1.0" shape-rendering="crispEdges" />
<polyline points="1145.1,523.0 1115.7,522.8" fill="none" stroke="#2fd02f" stroke-width="1.0" shape-rendering="crispEdges" />
<polyline points="1039.0,774.4 1067.6,832.8 1096.6,832.8 1068.0,774.4" fill="none" stroke="#2fd02f" stroke-width="1.0" shape-rendering="crispEdges" />
<polyline points="1115.7,522.8 1144.7,581.4 1174.0,581.6 1145.1,523.0" fill="none" stroke="#2fd02f" stroke-width="1.0" shape-rendering="crispEdges" />
<polyline points="1039.0,774.4 1115.7,522.8" fill="none" stroke="#2fd02f" stroke-width="1.0" shape-rendering="crispEdges" />
<polyline points="1077.3,734.2 1154.5,482.8" fill="none" stroke="#2fd02f" stroke-width="1.0" shape-rendering="crispEdges" />
<polyline points="1087.1,754.3 1164.5,503.0" fill="none" stroke="#2fd02f" stroke-width="1.0" shape-rendering="crispEdges" />
<polyline points="1068.0,774.4 1145.1,523.0" fill="none" stroke="#2fd02f" stroke-width="1.0" shape-rendering="crispEdges" />
<polyline points="1096.6,832.8 1174.0,581.6" fill="none" stroke="#2fd02f" stroke-width="1.0" shape-rendering="crispEdges" />
<polyline points="1067.6,832.8 1144.7,581.4" fill="none" stroke="#2fd02f" stroke-width="1.0" shape-rendering="crispEdges" />
<polyline points="1036.7,754.8 1113.4,503.2" fill="none" stroke="#2fd02f" stroke-width="1.0" shape-rendering="crispEdges" />
<polyline points="1066.9,764.6 1143.9,513.2" fill="none" stroke="#2fd02f" stroke-width="1.0" shape-rendering="crispEdges" />
</svg>
<!-- statusb -->
<div class="a" style="left:6px;top:1052px;width:22px;height:24px;box-sizing:border-box;background:#dee1e3;border:1px solid #b6babd"></div>
<svg style="left:9px;top:1056px" width="17" height="17" viewBox="0 0 17 17" ><defs><linearGradient id="lp" x1="0" y1="0" x2="0" y2="1"><stop offset="0" stop-color="#ffffff"/><stop offset="1" stop-color="#bcd6e6"/></linearGradient></defs><rect x="0.5" y="0.7" width="14.8" height="9.6" fill="#f4f5f6" stroke="#8d9295" stroke-width="1"/><rect x="1" y="1.4" width="13.8" height="2.2" fill="#fff"/><path d="M0.5,3.9 H15.3" stroke="#8d9295" stroke-width="0.8"/><path d="M15.3,4 V13" stroke="#8d9295" stroke-width="1"/><rect x="0.6" y="4.4" width="4.8" height="11.4" fill="url(#lp)" stroke="#1f6f94" stroke-width="1.1"/><path d="M0.4,16 H6" stroke="#14506e" stroke-width="0.9"/><path d="M7,13.5 Q11.5,8.7 16,13.5 Q11.5,18.3 7,13.5 Z" fill="#2e3336"/><circle cx="11.5" cy="13.5" r="1.7" fill="#fff"/><circle cx="11.5" cy="13.5" r="0.7" fill="#2e3336"/></svg>
<svg style="left:34px;top:1055px" width="18" height="18" viewBox="0 0 18 18" ><defs><radialGradient id="gl" cx="0.4" cy="0.35" r="0.8"><stop offset="0" stop-color="#7fd0f5"/><stop offset="0.6" stop-color="#2f9ade"/><stop offset="1" stop-color="#1b6fb0"/></radialGradient></defs><circle cx="9.2" cy="9" r="6.4" fill="url(#gl)"/><path d="M5.6,4.6 C7.6,3.4 9.8,4.4 10,6.2 C9,7.8 7.4,9 6,9.4 C4.6,8.4 4.6,6 5.6,4.6 Z M9.6,10.4 C11,9.2 13,9.8 13.6,11 C12.8,12.8 11.4,13.8 10,14 C9.2,13 9,11.4 9.6,10.4 Z M11.4,4.6 C12.4,5 13.4,5.8 13.6,6.8 C12.8,7 12,6.4 11.4,4.6 Z" fill="#cdeaf8" opacity="0.55"/><ellipse cx="9.2" cy="9" rx="9.6" ry="4" transform="rotate(-43 9.2 9)" fill="none" stroke="#3f4447" stroke-width="1"/><path d="M3.4,6 A6.4,6.4 0 0 1 12.4,3.6" fill="none" stroke="#2f9ade" stroke-width="2.2"/></svg>
<svg style="left:60.6px;top:1056px" width="18" height="17" viewBox="0 0 18 17" ><defs><linearGradient id="sq" x1="0" y1="0" x2="0" y2="1"><stop offset="0.1" stop-color="#fff"/><stop offset="1" stop-color="#c3d5e1"/></linearGradient></defs><rect x="0.9" y="0.6" width="15" height="15" rx="1" fill="url(#sq)" stroke="#2d84aa" stroke-width="1"/><path d="M1.2,15.7 H15.6" stroke="#1b6a8e" stroke-width="1.2"/></svg>
<div class="a" style="left:89px;top:1052px;width:1px;height:24px;background:#b4babd"></div>
<div class="a" style="left:1451px;top:1050px;width:1px;height:27px;background:#aab0b3"></div>
<div class="a" style="left:1532px;top:1050px;width:1px;height:27px;background:#aab0b3"></div>
<div class="a" style="left:1537px;top:1050px;width:1px;height:27px;background:#aab0b3"></div>
<div class="a" style="left:1580px;top:1050px;width:1px;height:27px;background:#aab0b3"></div>
<svg style="left:1454px;top:1056.6px" width="18" height="16" viewBox="0 0 18 16" ><polygon points="3.4,7.6 14.6,7.6 12,12.4 0.8,12.4" fill="#d0d3d4" stroke="#9a9ea0" stroke-width="0.6"/><polygon points="0.8,12.4 12,12.4 12,14 0.8,14" fill="#a9adaf"/><polygon points="12,12.4 14.6,7.6 14.6,9.2 12,14" fill="#8d9193"/><polygon points="4,1 15.4,1 12.8,6 1.4,6" fill="#b4e89c" stroke="#6cbf4a" stroke-width="0.7"/><polygon points="1.4,6 12.8,6 12.8,7.6 1.4,7.6" fill="#7fc765"/><polygon points="12.8,6 15.4,1 15.4,2.6 12.8,7.6" fill="#5fae43"/></svg>
<svg style="left:1543px;top:1057px" width="18" height="15" viewBox="0 0 18 15" ><path d="M2.6,1.6 H6.4 L7.4,5 V13.6 H0.8 V8 Z" fill="#3a3e41"/><path d="M14.2,1.6 H10.4 L9.4,5 V13.6 H16 V8 Z" fill="#3a3e41"/><rect x="6.6" y="4.6" width="3.6" height="4.4" fill="#5a5f62"/><rect x="2.8" y="0.6" width="3.2" height="1.6" fill="#6a6f72"/><rect x="10.8" y="0.6" width="3.2" height="1.6" fill="#6a6f72"/><path d="M2,9 V12.6 M14.8,9 V12.6" stroke="#8d9295" stroke-width="0.8"/></svg>
<svg style="left:1566.8px;top:1061.8px" width="7.2" height="4.2" viewBox="0 0 7.2 4.2"><polygon points="0,0 7.2,0 3.6,4.2" fill="#555c5f"/></svg>
<svg style="left:1586.6px;top:1056.6px" width="17" height="14" viewBox="0 0 17 14" ><rect x="0.8" y="0.8" width="14.4" height="11.2" fill="none" stroke="#2e3336" stroke-width="1.1" stroke-dasharray="3.2,2.2"/></svg>
<svg style="left:1610.2px;top:1061.8px" width="7.2" height="4.2" viewBox="0 0 7.2 4.2"><polygon points="0,0 7.2,0 3.6,4.2" fill="#555c5f"/></svg>
<svg style="left:1626.6px;top:1055.6px" width="18" height="18" viewBox="0 0 18 18" ><rect x="0.8" y="0.8" width="15.6" height="15.6" fill="#cfeaf8" stroke="#14628c" stroke-width="1" stroke-dasharray="2,1.4"/><path d="M2.6,5.4 Q6.4,1.8 10.2,5.4 Q6.4,9 2.6,5.4 Z" fill="#3a3e41"/><circle cx="6.4" cy="5.4" r="1.3" fill="#fff"/><circle cx="6.4" cy="5.4" r="0.55" fill="#3a3e41"/><path d="M9.6,7.4 V15.6 L11.6,13.8 L13,16.8 L14.4,16.2 L13,13.2 L15.6,13 Z" fill="#fff" stroke="#1c1f21" stroke-width="0.8" stroke-linejoin="round"/></svg>
<div class="a" style="left:1737px;top:1052px;width:165px;height:23px;box-sizing:border-box;background:#fafbfc;border:1px solid #a3a8ab"></div>
<div class="a" style="left:1886px;top:1053px;width:1px;height:21px;background:#a3a8ab"></div>
<svg style="left:1890.2px;top:1061.8px" width="7.4" height="4.4" viewBox="0 0 7.4 4.4"><polygon points="0,0 7.4,0 3.7,4.4" fill="#3e4548"/></svg>
<!-- texts -->
<span class="t" style="left:854.70px;top:8.72px;font-size:12.5px;transform:scaleX(0.9942);color:#3a4145;">DEFAULTS (Active) - Creo Parametric</span>
<span class="t" style="left:19.30px;top:36.00px;font-size:13px;transform:scaleX(0.9150);color:#ffffff;">File</span>
<span class="t" style="left:81.30px;top:36.00px;font-size:13px;transform:scaleX(0.9790);color:#3b8c22;">Sheetmetal</span>
<span class="t" style="left:192.30px;top:36.00px;font-size:13px;transform:scaleX(1.0769);color:#ffffff;">Model</span>
<span class="t" style="left:277.30px;top:36.00px;font-size:13px;transform:scaleX(0.9530);color:#ffffff;">Analysis</span>
<span class="t" style="left:370.55px;top:36.00px;font-size:13px;transform:scaleX(0.9746);color:#ffffff;">Live Simulation</span>
<span class="t" style="left:503.30px;top:36.00px;font-size:13px;transform:scaleX(0.9988);color:#ffffff;">Annotate</span>
<span class="t" style="left:602.30px;top:36.00px;font-size:13px;transform:scaleX(1.0262);color:#ffffff;">Tools</span>
<span class="t" style="left:679.90px;top:36.00px;font-size:13px;transform:scaleX(0.9946);color:#ffffff;">View</span>
<span class="t" style="left:754.30px;top:36.00px;font-size:13px;transform:scaleX(1.0204);color:#ffffff;">Flexible Modeling</span>
<span class="t" style="left:904.30px;top:36.00px;font-size:13px;transform:scaleX(1.0133);color:#ffffff;">Applications</span>
<span class="t" style="left:6.80px;top:104.14px;font-size:12px;transform:scaleX(0.9394);">Regenerate</span>
<span class="t" style="left:93.80px;top:62.84px;font-size:12px;transform:scaleX(0.9957);">Copy</span>
<span class="t" style="left:93.80px;top:89.84px;font-size:12px;transform:scaleX(0.9100);color:#b4babc;">Paste</span>
<span class="t" style="left:93.80px;top:116.14px;font-size:12px;transform:scaleX(0.9343);">Delete</span>
<span class="t" style="left:40.05px;top:143.84px;font-size:12px;transform:scaleX(0.9824);">Operations</span>
<span class="t" style="left:176.05px;top:62.84px;font-size:12px;transform:scaleX(0.9590);">User-Defined Feature</span>
<span class="t" style="left:176.05px;top:89.84px;font-size:12px;transform:scaleX(0.9803);">Copy Geometry</span>
<span class="t" style="left:176.05px;top:116.14px;font-size:12px;transform:scaleX(1.0122);">Merge/Inheritance</span>
<span class="t" style="left:193.80px;top:143.84px;font-size:12px;transform:scaleX(0.9290);">Get Data</span>
<span class="t" style="left:321.80px;top:62.84px;font-size:12px;transform:scaleX(0.9771);">Boolean Operations</span>
<span class="t" style="left:321.80px;top:89.84px;font-size:12px;transform:scaleX(1.0095);">Split/Trim Body</span>
<span class="t" style="left:321.80px;top:116.14px;font-size:12px;transform:scaleX(0.9804);">New Body</span>
<span class="t" style="left:345.05px;top:143.84px;font-size:12px;transform:scaleX(0.9649);">Body</span>
<span class="t" style="left:441.80px;top:104.14px;font-size:12px;transform:scaleX(0.9489);">Plane</span>
<span class="t" style="left:500.55px;top:62.84px;font-size:12px;transform:scaleX(0.9452);">Sketch</span>
<span class="t" style="left:500.55px;top:89.84px;font-size:12px;transform:scaleX(0.9215);">Axis</span>
<span class="t" style="left:500.55px;top:116.14px;font-size:12px;transform:scaleX(0.9764);">Coordinate System</span>
<span class="t" style="left:497.80px;top:143.84px;font-size:12px;transform:scaleX(0.9946);">Datum</span>
<span class="t" style="left:621.80px;top:104.14px;font-size:12px;transform:scaleX(0.9334);">Flat</span>
<span class="t" style="left:655.55px;top:104.14px;font-size:12px;transform:scaleX(0.9504);">Flange</span>
<span class="t" style="left:718.80px;top:62.84px;font-size:12px;transform:scaleX(0.9410);">Extrude</span>
<span class="t" style="left:718.80px;top:89.84px;font-size:12px;transform:scaleX(0.9415);">Planar</span>
<span class="t" style="left:718.80px;top:116.14px;font-size:12px;transform:scaleX(0.9768);">Boundary Blend</span>
<span class="t" style="left:689.30px;top:143.84px;font-size:12px;transform:scaleX(0.9841);">Walls</span>
<span class="t" style="left:817.70px;top:104.14px;font-size:12px;transform:scaleX(0.9447);">Extruded</span>
<span class="t" style="left:830.80px;top:118.84px;font-size:12px;transform:scaleX(1.0129);">Cut</span>
<span class="t" style="left:873.80px;top:104.14px;font-size:12px;transform:scaleX(0.9743);">Form</span>
<span class="t" style="left:918.55px;top:104.14px;font-size:12px;transform:scaleX(0.9389);">Rip</span>
<span class="t" style="left:951.80px;top:104.14px;font-size:12px;transform:scaleX(0.9783);">Conversion</span>
<span class="t" style="left:877.80px;top:143.84px;font-size:12px;transform:scaleX(0.9738);">Engineering</span>
<span class="t" style="left:1026.80px;top:104.14px;font-size:12px;transform:scaleX(0.9843);">Unbend</span>
<span class="t" style="left:1096.80px;top:62.84px;font-size:12px;transform:scaleX(0.9422);">Bend</span>
<span class="t" style="left:1096.80px;top:89.84px;font-size:12px;transform:scaleX(0.9409);">Bend Back</span>
<span class="t" style="left:1096.80px;top:116.14px;font-size:12px;transform:scaleX(0.9534);">Flat Pattern</span>
<span class="t" style="left:1078.05px;top:143.84px;font-size:12px;transform:scaleX(0.9303);">Bends</span>
<span class="t" style="left:1205.80px;top:62.84px;font-size:12px;transform:scaleX(0.9069);">Extend</span>
<span class="t" style="left:1204.80px;top:89.84px;font-size:12px;transform:scaleX(0.9605);">Join</span>
<span class="t" style="left:1205.80px;top:116.14px;font-size:12px;transform:scaleX(0.9760);">Merge Walls</span>
<span class="t" style="left:1204.80px;top:143.84px;font-size:12px;transform:scaleX(0.9845);">Editing</span>
<span class="t" style="left:1305.55px;top:104.14px;font-size:12px;transform:scaleX(0.9946);">Family</span>
<span class="t" style="left:1308.55px;top:118.84px;font-size:12px;transform:scaleX(0.9902);">Table</span>
<span class="t" style="left:1283.80px;top:143.84px;font-size:12px;transform:scaleX(1.0279);">Model Intent</span>
<svg style="left:128.80px;top:95.90px" width="7.4" height="4.3" viewBox="0 0 7.4 4.3"><polygon points="0,0 7.4,0 3.7,4.3" fill="#b9bec0"/></svg>
<svg style="left:133.80px;top:121.40px" width="7.4" height="4.3" viewBox="0 0 7.4 4.3"><polygon points="0,0 7.4,0 3.7,4.3" fill="#4b5154"/></svg>
<svg style="left:33.05px;top:121.90px" width="7.4" height="4.3" viewBox="0 0 7.4 4.3"><polygon points="0,0 7.4,0 3.7,4.3" fill="#4b5154"/></svg>
<svg style="left:100.80px;top:147.40px" width="7.4" height="4.3" viewBox="0 0 7.4 4.3"><polygon points="0,0 7.4,0 3.7,4.3" fill="#4b5154"/></svg>
<svg style="left:242.80px;top:147.40px" width="7.4" height="4.3" viewBox="0 0 7.4 4.3"><polygon points="0,0 7.4,0 3.7,4.3" fill="#4b5154"/></svg>
<svg style="left:375.80px;top:147.40px" width="7.4" height="4.3" viewBox="0 0 7.4 4.3"><polygon points="0,0 7.4,0 3.7,4.3" fill="#4b5154"/></svg>
<svg style="left:536.55px;top:147.40px" width="7.4" height="4.3" viewBox="0 0 7.4 4.3"><polygon points="0,0 7.4,0 3.7,4.3" fill="#4b5154"/></svg>
<svg style="left:721.55px;top:147.40px" width="7.4" height="4.3" viewBox="0 0 7.4 4.3"><polygon points="0,0 7.4,0 3.7,4.3" fill="#4b5154"/></svg>
<svg style="left:883.55px;top:121.90px" width="7.4" height="4.3" viewBox="0 0 7.4 4.3"><polygon points="0,0 7.4,0 3.7,4.3" fill="#4b5154"/></svg>
<svg style="left:924.05px;top:121.90px" width="7.4" height="4.3" viewBox="0 0 7.4 4.3"><polygon points="0,0 7.4,0 3.7,4.3" fill="#4b5154"/></svg>
<svg style="left:944.80px;top:147.40px" width="7.4" height="4.3" viewBox="0 0 7.4 4.3"><polygon points="0,0 7.4,0 3.7,4.3" fill="#4b5154"/></svg>
<svg style="left:1043.55px;top:121.90px" width="7.4" height="4.3" viewBox="0 0 7.4 4.3"><polygon points="0,0 7.4,0 3.7,4.3" fill="#4b5154"/></svg>
<svg style="left:1131.05px;top:66.90px" width="7.4" height="4.3" viewBox="0 0 7.4 4.3"><polygon points="0,0 7.4,0 3.7,4.3" fill="#4b5154"/></svg>
<svg style="left:1164.05px;top:119.90px" width="7.4" height="4.3" viewBox="0 0 7.4 4.3"><polygon points="0,0 7.4,0 3.7,4.3" fill="#4b5154"/></svg>
<svg style="left:1112.80px;top:147.40px" width="7.4" height="4.3" viewBox="0 0 7.4 4.3"><polygon points="0,0 7.4,0 3.7,4.3" fill="#4b5154"/></svg>
<svg style="left:1246.05px;top:147.40px" width="7.4" height="4.3" viewBox="0 0 7.4 4.3"><polygon points="0,0 7.4,0 3.7,4.3" fill="#4b5154"/></svg>
<svg style="left:1355.80px;top:147.40px" width="7.4" height="4.3" viewBox="0 0 7.4 4.3"><polygon points="0,0 7.4,0 3.7,4.3" fill="#4b5154"/></svg>
<div class="a" style="left:51px;top:378px;width:39px;height:17px;background:#b4e1f8"></div>
<span class="t" style="left:31.90px;top:256.22px;font-size:11.2px;transform:scaleX(0.8461);color:#2f3639;">DEFAULTS.PRT</span>
<span class="t" style="left:51.90px;top:274.12px;font-size:11.2px;transform:scaleX(0.9992);color:#2f3639;">Design Items</span>
<span class="t" style="left:51.90px;top:292.12px;font-size:11.2px;transform:scaleX(0.8756);color:#2f3639;">RIGHT</span>
<span class="t" style="left:51.90px;top:310.02px;font-size:11.2px;transform:scaleX(0.8272);color:#2f3639;">TOP</span>
<span class="t" style="left:51.90px;top:328.02px;font-size:11.2px;transform:scaleX(0.8942);color:#2f3639;">FRONT</span>
<span class="t" style="left:51.90px;top:346.02px;font-size:11.2px;transform:scaleX(0.8164);color:#2f3639;">PRT_CSYS_DEF</span>
<span class="t" style="left:51.90px;top:364.02px;font-size:11.2px;transform:scaleX(0.9947);color:#2f3639;">Extrude 1(First Wall)</span>
<span class="t" style="left:51.90px;top:381.92px;font-size:11.2px;transform:scaleX(0.9830);color:#2f3639;">Bend 1</span>
<span class="t" style="left:1650.80px;top:1057.84px;font-size:12px;transform:scaleX(0.9430);">1 selected</span>
<span class="t" style="left:1744.80px;top:1057.84px;font-size:12px;transform:scaleX(0.9852);">Geometry</span>
</body>
</html>
